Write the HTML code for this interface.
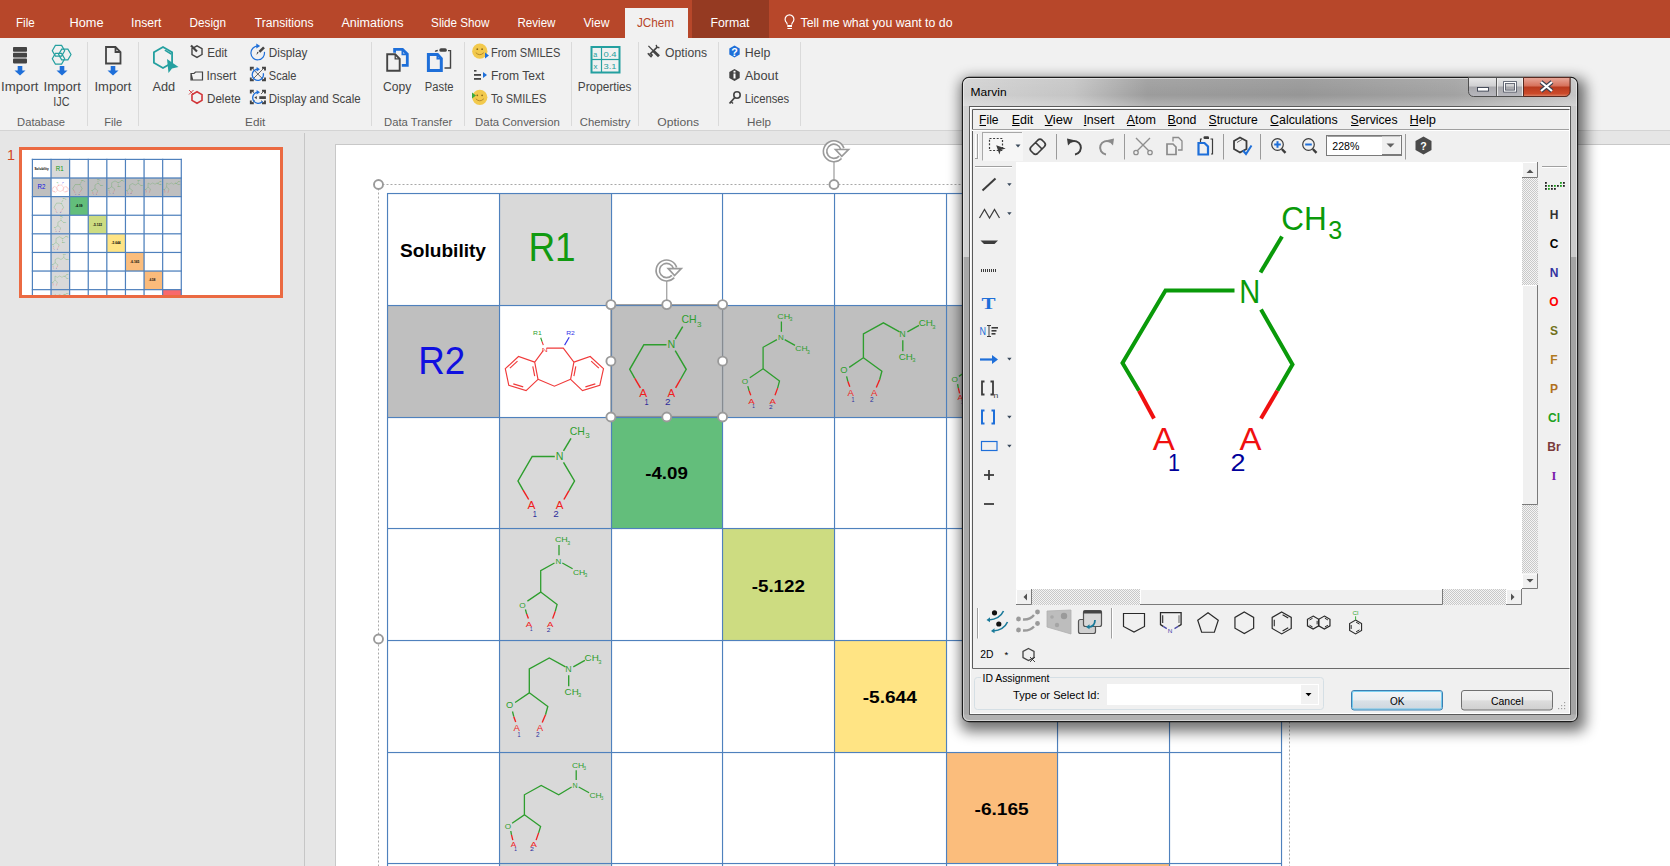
<!DOCTYPE html>
<html><head><meta charset="utf-8">
<style>
*{margin:0;padding:0}
html,body{width:1670px;height:866px;overflow:hidden;background:#E6E6E6}
svg{position:absolute;left:0;top:0;font-family:"Liberation Sans", sans-serif}
text{white-space:pre}
</style></head><body>
<svg width="1670" height="866" viewBox="0 0 1670 866">
<rect x="0" y="0" width="1670" height="38" fill="#B7472A"/>
<rect x="692" y="0" width="77" height="38" fill="#953A22"/>
<rect x="625" y="8" width="63" height="31" fill="#F1F1F1"/>
<text x="16.00" y="27.00" font-size="12.5" fill="#FFFFFF" textLength="18.70" lengthAdjust="spacingAndGlyphs">File</text>
<text x="69.50" y="27.00" font-size="12.5" fill="#FFFFFF" textLength="34.00" lengthAdjust="spacingAndGlyphs">Home</text>
<text x="131.00" y="27.00" font-size="12.5" fill="#FFFFFF" textLength="30.50" lengthAdjust="spacingAndGlyphs">Insert</text>
<text x="189.50" y="27.00" font-size="12.5" fill="#FFFFFF" textLength="36.60" lengthAdjust="spacingAndGlyphs">Design</text>
<text x="254.80" y="27.00" font-size="12.5" fill="#FFFFFF" textLength="58.70" lengthAdjust="spacingAndGlyphs">Transitions</text>
<text x="341.50" y="27.00" font-size="12.5" fill="#FFFFFF" textLength="62.00" lengthAdjust="spacingAndGlyphs">Animations</text>
<text x="431.10" y="27.00" font-size="12.5" fill="#FFFFFF" textLength="58.40" lengthAdjust="spacingAndGlyphs">Slide Show</text>
<text x="517.50" y="27.00" font-size="12.5" fill="#FFFFFF" textLength="38.00" lengthAdjust="spacingAndGlyphs">Review</text>
<text x="583.50" y="27.00" font-size="12.5" fill="#FFFFFF" textLength="26.00" lengthAdjust="spacingAndGlyphs">View</text>
<text x="710.50" y="27.00" font-size="12.5" fill="#FFFFFF" textLength="39.00" lengthAdjust="spacingAndGlyphs">Format</text>
<text x="636.90" y="27.00" font-size="12.5" fill="#B7472A" textLength="37.20" lengthAdjust="spacingAndGlyphs">JChem</text>
<path d="M787.4 24.6 L786.6 22.6 A4.4 4.4 0 1 1 792.4 22.6 L791.6 24.6" fill="none" stroke="#FFFFFF" stroke-width="1.2"/>
<rect x="787.3" y="25" width="4.7" height="2" fill="#FFFFFF"/>
<rect x="787.4" y="28" width="4.5" height="1" fill="#FFFFFF"/>
<text x="800.50" y="27.00" font-size="12.5" fill="#FFFFFF" textLength="152.00" lengthAdjust="spacingAndGlyphs">Tell me what you want to do</text>
<rect x="0" y="38" width="1670" height="92" fill="#F1F1F1"/>
<rect x="0" y="130" width="1670" height="1" fill="#D4D4D4"/>
<rect x="87" y="42" width="1" height="84" fill="#DADADA"/>
<rect x="138" y="42" width="1" height="84" fill="#DADADA"/>
<rect x="371" y="42" width="1" height="84" fill="#DADADA"/>
<rect x="464" y="42" width="1" height="84" fill="#DADADA"/>
<rect x="571" y="42" width="1" height="84" fill="#DADADA"/>
<rect x="638" y="42" width="1" height="84" fill="#DADADA"/>
<rect x="718" y="42" width="1" height="84" fill="#DADADA"/>
<rect x="800" y="42" width="1" height="84" fill="#DADADA"/>
<text x="1.10" y="90.60" font-size="12.3" fill="#444444" textLength="37.40" lengthAdjust="spacingAndGlyphs">Import</text>
<text x="43.50" y="90.60" font-size="12.3" fill="#444444" textLength="37.30" lengthAdjust="spacingAndGlyphs">Import</text>
<text x="53.20" y="106.40" font-size="12.3" fill="#444444" textLength="16.30" lengthAdjust="spacingAndGlyphs">IJC</text>
<text x="94.50" y="90.60" font-size="12.3" fill="#444444" textLength="36.80" lengthAdjust="spacingAndGlyphs">Import</text>
<text x="152.50" y="90.60" font-size="12.3" fill="#444444" textLength="22.70" lengthAdjust="spacingAndGlyphs">Add</text>
<text x="383.10" y="90.60" font-size="12.3" fill="#444444" textLength="28.30" lengthAdjust="spacingAndGlyphs">Copy</text>
<text x="424.80" y="90.60" font-size="12.3" fill="#444444" textLength="28.70" lengthAdjust="spacingAndGlyphs">Paste</text>
<text x="577.80" y="90.60" font-size="12.3" fill="#444444" textLength="53.70" lengthAdjust="spacingAndGlyphs">Properties</text>
<text x="207.20" y="56.90" font-size="12.3" fill="#444444" textLength="20.10" lengthAdjust="spacingAndGlyphs">Edit</text>
<text x="206.40" y="79.70" font-size="12.3" fill="#444444" textLength="30.00" lengthAdjust="spacingAndGlyphs">Insert</text>
<text x="207.00" y="103.00" font-size="12.3" fill="#444444" textLength="33.60" lengthAdjust="spacingAndGlyphs">Delete</text>
<text x="268.80" y="56.90" font-size="12.3" fill="#444444" textLength="38.50" lengthAdjust="spacingAndGlyphs">Display</text>
<text x="268.80" y="79.70" font-size="12.3" fill="#444444" textLength="27.60" lengthAdjust="spacingAndGlyphs">Scale</text>
<text x="268.80" y="103.00" font-size="12.3" fill="#444444" textLength="91.80" lengthAdjust="spacingAndGlyphs">Display and Scale</text>
<text x="490.90" y="56.90" font-size="12.3" fill="#444444" textLength="69.50" lengthAdjust="spacingAndGlyphs">From SMILES</text>
<text x="490.90" y="79.70" font-size="12.3" fill="#444444" textLength="53.50" lengthAdjust="spacingAndGlyphs">From Text</text>
<text x="490.90" y="103.00" font-size="12.3" fill="#444444" textLength="55.40" lengthAdjust="spacingAndGlyphs">To SMILES</text>
<text x="665.10" y="56.90" font-size="12.3" fill="#444444" textLength="41.90" lengthAdjust="spacingAndGlyphs">Options</text>
<text x="744.80" y="56.90" font-size="12.3" fill="#444444" textLength="25.50" lengthAdjust="spacingAndGlyphs">Help</text>
<text x="744.80" y="79.70" font-size="12.3" fill="#444444" textLength="33.40" lengthAdjust="spacingAndGlyphs">About</text>
<text x="744.80" y="103.00" font-size="12.3" fill="#444444" textLength="44.40" lengthAdjust="spacingAndGlyphs">Licenses</text>
<text x="17.10" y="126.10" font-size="11.5" fill="#5E5E5E" textLength="48.00" lengthAdjust="spacingAndGlyphs">Database</text>
<text x="104.20" y="126.10" font-size="11.5" fill="#5E5E5E" textLength="17.90" lengthAdjust="spacingAndGlyphs">File</text>
<text x="245.10" y="126.10" font-size="11.5" fill="#5E5E5E" textLength="20.20" lengthAdjust="spacingAndGlyphs">Edit</text>
<text x="384.00" y="126.10" font-size="11.5" fill="#5E5E5E" textLength="68.20" lengthAdjust="spacingAndGlyphs">Data Transfer</text>
<text x="475.10" y="126.10" font-size="11.5" fill="#5E5E5E" textLength="84.70" lengthAdjust="spacingAndGlyphs">Data Conversion</text>
<text x="579.80" y="126.10" font-size="11.5" fill="#5E5E5E" textLength="50.70" lengthAdjust="spacingAndGlyphs">Chemistry</text>
<text x="657.20" y="126.10" font-size="11.5" fill="#5E5E5E" textLength="41.90" lengthAdjust="spacingAndGlyphs">Options</text>
<text x="747.00" y="126.10" font-size="11.5" fill="#5E5E5E" textLength="24.00" lengthAdjust="spacingAndGlyphs">Help</text>
<rect x="13" y="47.0" width="14" height="4.8" fill="#444444" rx="0.8"/>
<rect x="13" y="52.8" width="14" height="4.8" fill="#444444" rx="0.8"/>
<rect x="13" y="58.6" width="14" height="4.8" fill="#444444" rx="0.8"/>
<rect x="17.7" y="66" width="4.6" height="5" fill="#1E6FD9"/>
<path d="M14.5 70.5 L25.5 70.5 L20 75.5 Z" fill="#1E6FD9"/>
<path d="M64.70 50.80 L61.60 56.17 L55.40 56.17 L52.30 50.80 L55.40 45.43 L61.60 45.43 Z" fill="none" stroke="#24A0A0" stroke-width="1.2"/>
<path d="M71.00 54.50 L67.90 59.87 L61.70 59.87 L58.60 54.50 L61.70 49.13 L67.90 49.13 Z" fill="none" stroke="#24A0A0" stroke-width="1.2"/>
<path d="M64.70 58.80 L61.60 64.17 L55.40 64.17 L52.30 58.80 L55.40 53.43 L61.60 53.43 Z" fill="none" stroke="#24A0A0" stroke-width="1.2"/>
<rect x="59.7" y="66" width="4.6" height="5" fill="#1E6FD9"/>
<path d="M56.5 70.5 L67.5 70.5 L62 75.5 Z" fill="#1E6FD9"/>
<path d="M106 47 h9.5 l5 5 v11.5 h-14.5 Z M115.5 47 v5 h5" fill="none" stroke="#444444" stroke-width="1.8"/>
<rect x="110.7" y="66" width="4.6" height="5" fill="#1E6FD9"/>
<path d="M107.5 70.5 L118.5 70.5 L113 75.5 Z" fill="#1E6FD9"/>
<path d="M172.09 62.75 L163.00 68.00 L153.91 62.75 L153.91 52.25 L163.00 47.00 L172.09 52.25 Z" fill="none" stroke="#24A0A0" stroke-width="1.8"/>
<line x1="164.8" y1="50.2" x2="171.2" y2="54" stroke="#24A0A0" stroke-width="1.5"/>
<path d="M167 59 L178.5 67 L172 68.5 L168.5 73 Z" fill="#24A0A0"/>
<path d="M202.02 54.50 L197.00 57.40 L191.98 54.50 L191.98 48.70 L197.00 45.80 L202.02 48.70 Z" fill="none" stroke="#444444" stroke-width="1.4"/>
<line x1="191" y1="45.5" x2="197" y2="51.5" stroke="#444444" stroke-width="2.2"/>
<path d="M191 73.5 h3 l1.5-1.5 h7 v8 h-11.5 Z M191 73.5 l1.5 6" fill="none" stroke="#444444" stroke-width="1.2"/>
<path d="M202.02 100.40 L197.00 103.30 L191.98 100.40 L191.98 94.60 L197.00 91.70 L202.02 94.60 Z" fill="none" stroke="#D13438" stroke-width="1.6"/>
<line x1="189" y1="90" x2="193.5" y2="94.5" stroke="#D13438" stroke-width="0.9"/>
<line x1="193.5" y1="90" x2="189" y2="94.5" stroke="#D13438" stroke-width="0.9"/>
<path d="M257.8 46.2 A6.8 6.8 0 1 0 264.4 51.8" fill="none" stroke="#1E6FD9" stroke-width="1.2"/>
<path d="M256.3 43.6 L260.2 46 L256.3 48.4 Z" fill="#1E6FD9"/>
<line x1="264" y1="47.3" x2="259.4" y2="51.9" stroke="#444444" stroke-width="2.6"/>
<path d="M258.7 52.6 L256.4 54.9 L257.3 51.8 Z" fill="#444444"/>
<path d="M250.8 70.5 V67.8 H253.8 M262 67.8 H265 V70.5 M250.8 77.5 V80.2 H253.8 M262 80.2 H265 V77.5" fill="none" stroke="#444444" stroke-width="1.9"/>
<line x1="252" y1="68.2" x2="263.8" y2="80" stroke="#444444" stroke-width="0.8"/>
<line x1="263.8" y1="68.2" x2="252" y2="80" stroke="#444444" stroke-width="0.8"/>
<path d="M257.8 69.2 A5.6 5.6 0 1 0 263.2 73.2" fill="none" stroke="#1E6FD9" stroke-width="1.3"/>
<path d="M256.6 67 L260 69.2 L256.6 71.4 Z" fill="#1E6FD9"/>
<path d="M250.8 93.5 V90.8 H253.8 M262 90.8 H265 V93.5 M250.8 100.5 V103.2 H253.8 M262 103.2 H265 V100.5" fill="none" stroke="#444444" stroke-width="1.9"/>
<line x1="252" y1="91.2" x2="255" y2="94" stroke="#444444" stroke-width="0.8"/>
<line x1="263.8" y1="91.2" x2="261" y2="94" stroke="#444444" stroke-width="0.8"/>
<line x1="252" y1="103" x2="255" y2="100.5" stroke="#444444" stroke-width="0.8"/>
<line x1="263.8" y1="103" x2="261" y2="100.5" stroke="#444444" stroke-width="0.8"/>
<path d="M257.8 92.2 A5.6 5.6 0 1 0 262.5 101.5" fill="none" stroke="#1E6FD9" stroke-width="1.3"/>
<path d="M256.6 90 L260 92.2 L256.6 94.4 Z" fill="#1E6FD9"/>
<rect x="259.3" y="96.2" width="6.6" height="2.8" fill="#444444"/>
<path d="M254.3 97.6 L256.8 96 V99.2 Z" fill="#444444"/>
<path d="M394.6 52.8 V49.4 H402.5 L407.3 54.2 V65.3 H401.8" fill="none" stroke="#1E6FD9" stroke-width="2.8"/>
<path d="M402.3 49.6 V54.4 H407.1" fill="none" stroke="#1E6FD9" stroke-width="1.6"/>
<path d="M387.2 54.3 H395.2 L399.7 58.8 V70.8 H387.2 Z" fill="#F1F1F1" stroke="#444444" stroke-width="1.9"/>
<path d="M395.2 54.5 V58.8 H399.5" fill="none" stroke="#444444" stroke-width="1.3"/>
<path d="M435.5 51.8 Q435.5 50.5 437.8 50.5 M448 50.6 H450.5 V68 H444.5" fill="none" stroke="#444444" stroke-width="1.4"/>
<rect x="439.4" y="48.2" width="7.4" height="3.6" fill="#444444" rx="1.6"/>
<path d="M428.4 54.5 H437.5 L441.3 58.5 V70.4 H428.4 Z" fill="#F1F1F1" stroke="#1E6FD9" stroke-width="3"/>
<path d="M437.3 54.7 V58.7 H441.1" fill="none" stroke="#1E6FD9" stroke-width="1.6"/>
<circle cx="479.8" cy="51.2" r="7.6" fill="#F2C94C"/>
<circle cx="477.3" cy="49.2" r="0.9" fill="#8A6A1A"/><circle cx="482.1" cy="49.2" r="0.9" fill="#8A6A1A"/>
<path d="M475.8 52.7 q4 4 8 0" fill="none" stroke="#B58A2A" stroke-width="1"/>
<path d="M485 52.5 L489 55.5 L485 58.5 Z" fill="#1E6FD9"/>
<circle cx="479.8" cy="97.3" r="7.6" fill="#F2C94C"/>
<circle cx="477.3" cy="95.3" r="0.9" fill="#8A6A1A"/><circle cx="482.1" cy="95.3" r="0.9" fill="#8A6A1A"/>
<path d="M475.8 98.8 q4 4 8 0" fill="none" stroke="#B58A2A" stroke-width="1"/>
<path d="M472 92.5 L476 95.5 L472 98.5 Z" fill="#3DAA3D"/>
<rect x="474" y="70" width="2.5" height="1.6" fill="#444444"/>
<rect x="474" y="74" width="7" height="1.8" fill="#444444"/>
<rect x="474" y="78" width="7" height="1.8" fill="#444444"/>
<path d="M483 72 L487 75 L483 78 Z" fill="#1E6FD9"/>
<rect x="591.5" y="47" width="28" height="25.5" fill="none" stroke="#24A0A0" stroke-width="2"/>
<line x1="601.5" y1="47" x2="601.5" y2="72.5" stroke="#24A0A0" stroke-width="1.2"/>
<line x1="591.5" y1="59.5" x2="619.5" y2="59.5" stroke="#24A0A0" stroke-width="1.2"/>
<text x="593.30" y="56.50" font-size="7" fill="#24A0A0" textLength="4.00" lengthAdjust="spacingAndGlyphs">a</text>
<text x="603.50" y="56.80" font-size="7" fill="#24A0A0" textLength="13.00" lengthAdjust="spacingAndGlyphs">0.4</text>
<text x="593.50" y="68.80" font-size="7" fill="#24A0A0" textLength="4.00" lengthAdjust="spacingAndGlyphs">x</text>
<text x="603.50" y="69.00" font-size="7" fill="#24A0A0" textLength="13.00" lengthAdjust="spacingAndGlyphs">3.1</text>
<line x1="648.4" y1="45.9" x2="653.5" y2="51" stroke="#444444" stroke-width="1.3"/>
<line x1="653.2" y1="50.7" x2="659" y2="56.2" stroke="#444444" stroke-width="2.8"/>
<line x1="649.5" y1="54.5" x2="657.5" y2="46.8" stroke="#444444" stroke-width="1.7"/>
<path d="M647.8 53.2 L649.5 55.2 L651 56.6 L652.2 55 L650.5 53.5" fill="none" stroke="#444444" stroke-width="1.4"/>
<path d="M656.2 44.8 L656.8 47.2 L659.4 47.8" fill="none" stroke="#444444" stroke-width="1.4"/>
<path d="M739.70 54.50 L734.50 57.50 L729.30 54.50 L729.30 48.50 L734.50 45.50 L739.70 48.50 Z" fill="#1E6FD9"/>
<text x="731.30" y="56.00" font-size="11.5" fill="#FFFFFF" textLength="6.50" lengthAdjust="spacingAndGlyphs" font-weight="bold">?</text>
<path d="M739.70 78.00 L734.50 81.00 L729.30 78.00 L729.30 72.00 L734.50 69.00 L739.70 72.00 Z" fill="#444444"/>
<rect x="733.5" y="73.5" width="2" height="5" fill="#FFFFFF"/>
<rect x="733.5" y="70.8" width="2" height="1.8" fill="#FFFFFF"/>
<circle cx="737" cy="95" r="3.2" fill="none" stroke="#444444" stroke-width="1.6"/>
<line x1="734.8" y1="97.5" x2="729.5" y2="103.5" stroke="#444444" stroke-width="1.8"/>
<line x1="731" y1="101.5" x2="733" y2="103.5" stroke="#444444" stroke-width="1.4"/>
<rect x="0" y="131" width="1670" height="735" fill="#E6E6E6"/>
<rect x="304" y="133" width="1" height="733" fill="#C6C6C6"/>
<defs><clipPath id="mainclip"><rect x="336" y="145" width="1335" height="722"/></clipPath><clipPath id="thumbclip"><rect x="22" y="150" width="258" height="145"/></clipPath></defs>
<rect x="335" y="144" width="1340" height="730" fill="#C8C8C8"/>
<rect x="336" y="145" width="1340" height="730" fill="#FFFFFF"/>
<g clip-path="url(#mainclip)"><g transform="translate(335,144)"><rect x="164.20" y="49.60" width="111.70" height="111.70" fill="#D9D9D9"/><rect x="52.50" y="161.30" width="893.60" height="111.70" fill="#BFBFBF"/><rect x="164.20" y="161.30" width="111.70" height="111.70" fill="#FFFFFF"/><rect x="164.20" y="273.00" width="111.70" height="670.20" fill="#D9D9D9"/><rect x="275.90" y="273.00" width="111.70" height="111.70" fill="#63BE7B"/><rect x="387.60" y="384.70" width="111.70" height="111.70" fill="#CDDC81"/><rect x="499.30" y="496.40" width="111.70" height="111.70" fill="#FFE484"/><rect x="611.00" y="608.10" width="111.70" height="111.70" fill="#FBBD7C"/><rect x="722.70" y="719.80" width="111.70" height="111.70" fill="#FBBB7B"/><rect x="834.40" y="831.50" width="111.70" height="111.70" fill="#F8696B"/><rect x="51.95" y="49.10" width="1.15" height="894.60" fill="#4F81BD"/><rect x="163.95" y="49.10" width="1.15" height="894.60" fill="#4F81BD"/><rect x="275.95" y="49.10" width="1.15" height="894.60" fill="#4F81BD"/><rect x="386.95" y="49.10" width="1.15" height="894.60" fill="#4F81BD"/><rect x="498.95" y="49.10" width="1.15" height="894.60" fill="#4F81BD"/><rect x="610.95" y="49.10" width="1.15" height="894.60" fill="#4F81BD"/><rect x="721.95" y="49.10" width="1.15" height="894.60" fill="#4F81BD"/><rect x="833.95" y="49.10" width="1.15" height="894.60" fill="#4F81BD"/><rect x="945.95" y="49.10" width="1.15" height="894.60" fill="#4F81BD"/><rect x="52.00" y="48.95" width="894.60" height="1.15" fill="#4F81BD"/><rect x="52.00" y="160.95" width="894.60" height="1.15" fill="#4F81BD"/><rect x="52.00" y="272.95" width="894.60" height="1.15" fill="#4F81BD"/><rect x="52.00" y="383.95" width="894.60" height="1.15" fill="#4F81BD"/><rect x="52.00" y="495.95" width="894.60" height="1.15" fill="#4F81BD"/><rect x="52.00" y="607.95" width="894.60" height="1.15" fill="#4F81BD"/><rect x="52.00" y="718.95" width="894.60" height="1.15" fill="#4F81BD"/><rect x="52.00" y="830.95" width="894.60" height="1.15" fill="#4F81BD"/><rect x="52.00" y="942.95" width="894.60" height="1.15" fill="#4F81BD"/><text x="65.00" y="112.60" font-size="19" font-weight="bold" fill="#000" textLength="86" lengthAdjust="spacingAndGlyphs">Solubility</text><text x="193.40" y="116.90" font-size="41.5" fill="#119A11" textLength="47.3" lengthAdjust="spacingAndGlyphs">R1</text><text x="83.30" y="230.20" font-size="39" fill="#1010E0" textLength="47" lengthAdjust="spacingAndGlyphs">R2</text><text x="310.20" y="335.30" font-size="17.2" font-weight="bold" fill="#000" textLength="42.70" lengthAdjust="spacingAndGlyphs">-4.09</text><text x="416.70" y="447.90" font-size="17.2" font-weight="bold" fill="#000" textLength="53.30" lengthAdjust="spacingAndGlyphs">-5.122</text><text x="527.70" y="559.00" font-size="17.2" font-weight="bold" fill="#000" textLength="54.20" lengthAdjust="spacingAndGlyphs">-5.644</text><text x="639.60" y="670.80" font-size="17.2" font-weight="bold" fill="#000" textLength="54.10" lengthAdjust="spacingAndGlyphs">-6.165</text><text x="750.70" y="780.80" font-size="17.2" font-weight="bold" fill="#000">-6.58</text><text x="862.40" y="892.50" font-size="17.2" font-weight="bold" fill="#000">-7.2</text><g transform="translate(164.20,161.30)"><path d="M47.30 42.80 L64.10 42.80 L74.70 56.80 L71.40 74.00 L83.30 85.30 L100.60 80.00 L104.30 63.40 L91.00 51.20 L74.70 56.80" fill="none" stroke="#F03A3A" stroke-width="1.15" stroke-linecap="butt" stroke-linejoin="miter"/><path d="M44.20 45.00 L35.50 56.80 L38.80 74.00 L26.90 85.30 L9.60 80.00 L6.10 63.40 L19.30 51.20 L35.50 56.80" fill="none" stroke="#F03A3A" stroke-width="1.15" stroke-linecap="butt" stroke-linejoin="miter"/><path d="M38.80 74.00 L55.20 80.90 L71.40 74.00" fill="none" stroke="#F03A3A" stroke-width="1.15" stroke-linecap="butt" stroke-linejoin="miter"/><path d="M18.29 55.81 L10.71 62.81" fill="none" stroke="#F03A3A" stroke-width="1.15" stroke-linecap="butt" stroke-linejoin="miter"/><path d="M14.09 78.57 L24.02 81.62" fill="none" stroke="#F03A3A" stroke-width="1.15" stroke-linecap="butt" stroke-linejoin="miter"/><path d="M33.60 61.01 L35.50 70.89" fill="none" stroke="#F03A3A" stroke-width="1.15" stroke-linecap="butt" stroke-linejoin="miter"/><path d="M92.01 55.81 L99.65 62.81" fill="none" stroke="#F03A3A" stroke-width="1.15" stroke-linecap="butt" stroke-linejoin="miter"/><path d="M96.12 78.57 L86.19 81.62" fill="none" stroke="#F03A3A" stroke-width="1.15" stroke-linecap="butt" stroke-linejoin="miter"/><path d="M76.61 61.01 L74.71 70.89" fill="none" stroke="#F03A3A" stroke-width="1.15" stroke-linecap="butt" stroke-linejoin="miter"/><path d="M44.10 39.80 L42.80 36.15" fill="none" stroke="#F03A3A" stroke-width="1.15" stroke-linecap="butt" stroke-linejoin="miter"/><path d="M42.80 36.15 L41.50 32.50" fill="none" stroke="#2E9E2E" stroke-width="1.15" stroke-linecap="butt" stroke-linejoin="miter"/><path d="M65.40 39.80 L70.00 31.90" fill="none" stroke="#3535E8" stroke-width="1.15" stroke-linecap="butt" stroke-linejoin="miter"/><text x="42.60" y="46.30" font-size="5.8" fill="#F03A3A" textLength="6.00" lengthAdjust="spacingAndGlyphs">N</text><text x="33.90" y="29.60" font-size="5.8" fill="#2E9E2E" textLength="8.60" lengthAdjust="spacingAndGlyphs">R1</text><text x="67.00" y="29.60" font-size="5.8" fill="#3535E8" textLength="8.60" lengthAdjust="spacingAndGlyphs">R2</text></g><g transform="translate(275.90,161.30)"><path d="M71.80 21.30 L64.30 33.90" fill="none" stroke="#2E9E2E" stroke-width="1.45" stroke-linecap="butt" stroke-linejoin="miter"/><path d="M55.60 39.40 L33.00 39.40 L18.80 64.00 L23.90 73.10" fill="none" stroke="#2E9E2E" stroke-width="1.45" stroke-linecap="butt" stroke-linejoin="miter"/><path d="M23.90 73.10 L29.50 82.50" fill="none" stroke="#F01E1E" stroke-width="1.45" stroke-linecap="butt" stroke-linejoin="miter"/><path d="M64.30 45.30 L75.30 64.00 L69.80 73.70" fill="none" stroke="#2E9E2E" stroke-width="1.45" stroke-linecap="butt" stroke-linejoin="miter"/><path d="M69.80 73.70 L64.70 82.50" fill="none" stroke="#F01E1E" stroke-width="1.45" stroke-linecap="butt" stroke-linejoin="miter"/><text x="70.60" y="17.50" font-size="10.2" fill="#2E9E2E" textLength="15.10" lengthAdjust="spacingAndGlyphs">CH</text><text x="86.10" y="21.30" font-size="7.4" fill="#2E9E2E" textLength="4.50" lengthAdjust="spacingAndGlyphs">3</text><text x="56.60" y="42.70" font-size="10.6" fill="#2E9E2E" textLength="7.70" lengthAdjust="spacingAndGlyphs">N</text><text x="28.40" y="91.80" font-size="10.6" fill="#F01E1E" textLength="7.90" lengthAdjust="spacingAndGlyphs">A</text><text x="56.60" y="91.80" font-size="10.6" fill="#F01E1E" textLength="7.70" lengthAdjust="spacingAndGlyphs">A</text><text x="33.60" y="100.20" font-size="8.8" fill="#2B2B9B" textLength="4.10" lengthAdjust="spacingAndGlyphs">1</text><text x="54.00" y="100.20" font-size="8.8" fill="#2B2B9B" textLength="5.50" lengthAdjust="spacingAndGlyphs">2</text></g><g transform="translate(387.60,161.30)"><path d="M58.80 16.20 L58.80 26.50" fill="none" stroke="#2E9E2E" stroke-width="1.3" stroke-linecap="butt" stroke-linejoin="miter"/><path d="M62.10 34.30 L72.40 40.10" fill="none" stroke="#2E9E2E" stroke-width="1.3" stroke-linecap="butt" stroke-linejoin="miter"/><path d="M54.30 34.30 L40.50 42.00 L40.50 63.40 L27.20 72.40" fill="none" stroke="#2E9E2E" stroke-width="1.3" stroke-linecap="butt" stroke-linejoin="miter"/><path d="M40.50 63.40 L56.90 75.70 L55.00 82.80" fill="none" stroke="#2E9E2E" stroke-width="1.3" stroke-linecap="butt" stroke-linejoin="miter"/><path d="M55.00 82.80 L52.40 89.90" fill="none" stroke="#F01E1E" stroke-width="1.3" stroke-linecap="butt" stroke-linejoin="miter"/><path d="M25.20 80.80 L26.50 85.40" fill="none" stroke="#2E9E2E" stroke-width="1.3" stroke-linecap="butt" stroke-linejoin="miter"/><path d="M26.50 85.40 L28.20 89.90" fill="none" stroke="#F01E1E" stroke-width="1.3" stroke-linecap="butt" stroke-linejoin="miter"/><text x="54.70" y="13.60" font-size="7.2" fill="#2E9E2E" textLength="12.90" lengthAdjust="spacingAndGlyphs">CH</text><text x="67.00" y="16.00" font-size="5.2" fill="#2E9E2E" textLength="2.90" lengthAdjust="spacingAndGlyphs">3</text><text x="72.70" y="45.90" font-size="7.2" fill="#2E9E2E" textLength="12.30" lengthAdjust="spacingAndGlyphs">CH</text><text x="84.40" y="48.30" font-size="5.2" fill="#2E9E2E" textLength="2.80" lengthAdjust="spacingAndGlyphs">3</text><text x="55.30" y="34.90" font-size="8" fill="#2E9E2E" textLength="5.80" lengthAdjust="spacingAndGlyphs">N</text><text x="19.10" y="78.90" font-size="8" fill="#2E9E2E" textLength="6.40" lengthAdjust="spacingAndGlyphs">O</text><text x="25.60" y="98.30" font-size="8" fill="#F01E1E" textLength="6.40" lengthAdjust="spacingAndGlyphs">A</text><text x="46.90" y="98.30" font-size="8" fill="#F01E1E" textLength="6.40" lengthAdjust="spacingAndGlyphs">A</text><text x="29.70" y="102.80" font-size="5.5" fill="#2B2B9B" textLength="2.50" lengthAdjust="spacingAndGlyphs">1</text><text x="46.50" y="103.50" font-size="5.5" fill="#2B2B9B" textLength="3.60" lengthAdjust="spacingAndGlyphs">2</text></g><g transform="translate(499.30,161.30)"><path d="M65.30 26.50 L49.10 17.50 L29.10 28.50 L29.10 52.40 L14.90 62.10" fill="none" stroke="#2E9E2E" stroke-width="1.35" stroke-linecap="butt" stroke-linejoin="miter"/><path d="M29.10 52.40 L47.60 66.00 L45.30 74.40" fill="none" stroke="#2E9E2E" stroke-width="1.35" stroke-linecap="butt" stroke-linejoin="miter"/><path d="M45.30 74.40 L42.00 82.10" fill="none" stroke="#F01E1E" stroke-width="1.35" stroke-linecap="butt" stroke-linejoin="miter"/><path d="M12.30 71.10 L13.60 76.30" fill="none" stroke="#2E9E2E" stroke-width="1.35" stroke-linecap="butt" stroke-linejoin="miter"/><path d="M13.60 76.30 L15.50 81.50" fill="none" stroke="#F01E1E" stroke-width="1.35" stroke-linecap="butt" stroke-linejoin="miter"/><path d="M73.10 26.50 L84.70 20.00" fill="none" stroke="#2E9E2E" stroke-width="1.35" stroke-linecap="butt" stroke-linejoin="miter"/><path d="M68.50 34.90 L68.50 45.90" fill="none" stroke="#2E9E2E" stroke-width="1.35" stroke-linecap="butt" stroke-linejoin="miter"/><text x="5.90" y="67.90" font-size="8.4" fill="#2E9E2E" textLength="7.30" lengthAdjust="spacingAndGlyphs">O</text><text x="65.00" y="31.70" font-size="8.4" fill="#2E9E2E" textLength="6.40" lengthAdjust="spacingAndGlyphs">N</text><text x="84.40" y="20.70" font-size="9" fill="#2E9E2E" textLength="14.20" lengthAdjust="spacingAndGlyphs">CH</text><text x="98.00" y="23.50" font-size="6" fill="#2E9E2E" textLength="3.20" lengthAdjust="spacingAndGlyphs">3</text><text x="64.40" y="54.30" font-size="9" fill="#2E9E2E" textLength="14.10" lengthAdjust="spacingAndGlyphs">CH</text><text x="77.90" y="57.10" font-size="6" fill="#2E9E2E" textLength="3.20" lengthAdjust="spacingAndGlyphs">3</text><text x="13.30" y="90.50" font-size="8.4" fill="#F01E1E" textLength="6.40" lengthAdjust="spacingAndGlyphs">A</text><text x="36.60" y="90.50" font-size="8.4" fill="#F01E1E" textLength="6.40" lengthAdjust="spacingAndGlyphs">A</text><text x="17.20" y="96.40" font-size="6.5" fill="#2B2B9B" textLength="3.00" lengthAdjust="spacingAndGlyphs">1</text><text x="35.70" y="96.40" font-size="6.5" fill="#2B2B9B" textLength="3.60" lengthAdjust="spacingAndGlyphs">2</text></g><g transform="translate(611.00,161.30)"><path d="M77.00 18.10 L77.00 27.80" fill="none" stroke="#2E9E2E" stroke-width="1.3" stroke-linecap="butt" stroke-linejoin="miter"/><path d="M79.50 34.90 L89.90 40.70" fill="none" stroke="#2E9E2E" stroke-width="1.3" stroke-linecap="butt" stroke-linejoin="miter"/><path d="M72.40 34.90 L59.50 42.70 L42.00 33.40 L25.20 42.70 L25.20 62.70 L12.90 71.10" fill="none" stroke="#2E9E2E" stroke-width="1.3" stroke-linecap="butt" stroke-linejoin="miter"/><path d="M25.20 62.70 L41.40 74.40 L39.40 80.80" fill="none" stroke="#2E9E2E" stroke-width="1.3" stroke-linecap="butt" stroke-linejoin="miter"/><path d="M39.40 80.80 L36.90 88.00" fill="none" stroke="#F01E1E" stroke-width="1.3" stroke-linecap="butt" stroke-linejoin="miter"/><path d="M11.60 78.90 L12.30 82.80" fill="none" stroke="#2E9E2E" stroke-width="1.3" stroke-linecap="butt" stroke-linejoin="miter"/><path d="M12.30 82.80 L13.60 88.00" fill="none" stroke="#F01E1E" stroke-width="1.3" stroke-linecap="butt" stroke-linejoin="miter"/><text x="72.70" y="16.20" font-size="6.6" fill="#2E9E2E" textLength="12.30" lengthAdjust="spacingAndGlyphs">CH</text><text x="84.40" y="18.20" font-size="4.6" fill="#2E9E2E" textLength="2.50" lengthAdjust="spacingAndGlyphs">3</text><text x="90.20" y="45.90" font-size="6.6" fill="#2E9E2E" textLength="12.30" lengthAdjust="spacingAndGlyphs">CH</text><text x="101.90" y="47.90" font-size="4.6" fill="#2E9E2E" textLength="2.30" lengthAdjust="spacingAndGlyphs">3</text><text x="73.40" y="35.60" font-size="6.5" fill="#2E9E2E" textLength="5.10" lengthAdjust="spacingAndGlyphs">N</text><text x="5.50" y="77.00" font-size="7" fill="#2E9E2E" textLength="6.40" lengthAdjust="spacingAndGlyphs">O</text><text x="11.60" y="95.10" font-size="7" fill="#F01E1E" textLength="5.50" lengthAdjust="spacingAndGlyphs">A</text><text x="31.40" y="95.10" font-size="7" fill="#F01E1E" textLength="6.40" lengthAdjust="spacingAndGlyphs">A</text><text x="15.00" y="98.90" font-size="5" fill="#2B2B9B" textLength="2.60" lengthAdjust="spacingAndGlyphs">1</text><text x="30.70" y="99.00" font-size="5" fill="#2B2B9B" textLength="3.90" lengthAdjust="spacingAndGlyphs">2</text></g><g transform="translate(722.70,161.30)"><path d="M80.00 28.00 L66.00 38.00 L52.00 30.00 L38.00 38.00 L24.00 30.00 L24.00 55.00 L12.00 66.00" fill="none" stroke="#2E9E2E" stroke-width="1.2" stroke-linecap="butt" stroke-linejoin="miter"/><path d="M24.00 55.00 L38.00 66.00 L36.00 75.00" fill="none" stroke="#2E9E2E" stroke-width="1.2" stroke-linecap="butt" stroke-linejoin="miter"/><path d="M36.00 75.00 L33.00 84.00" fill="none" stroke="#F01E1E" stroke-width="1.2" stroke-linecap="butt" stroke-linejoin="miter"/><path d="M11.00 72.00 L14.00 84.00" fill="none" stroke="#F01E1E" stroke-width="1.2" stroke-linecap="butt" stroke-linejoin="miter"/><path d="M84.00 30.00 L94.00 24.00" fill="none" stroke="#2E9E2E" stroke-width="1.2" stroke-linecap="butt" stroke-linejoin="miter"/><path d="M84.00 34.00 L94.00 40.00" fill="none" stroke="#2E9E2E" stroke-width="1.2" stroke-linecap="butt" stroke-linejoin="miter"/><text x="77.70" y="34.00" font-size="7" fill="#2E9E2E" textLength="6.60" lengthAdjust="spacingAndGlyphs">N</text><text x="93.70" y="24.00" font-size="6.5" fill="#2E9E2E" textLength="10.60" lengthAdjust="spacingAndGlyphs">CH</text><text x="93.70" y="45.00" font-size="6.5" fill="#2E9E2E" textLength="10.60" lengthAdjust="spacingAndGlyphs">CH</text><text x="5.70" y="71.00" font-size="7" fill="#2E9E2E" textLength="6.60" lengthAdjust="spacingAndGlyphs">O</text><text x="10.70" y="91.00" font-size="7" fill="#F01E1E" textLength="5.60" lengthAdjust="spacingAndGlyphs">A</text><text x="29.70" y="91.00" font-size="7" fill="#F01E1E" textLength="6.60" lengthAdjust="spacingAndGlyphs">A</text></g><g transform="translate(834.40,161.30)"><path d="M80.00 28.00 L66.00 38.00 L52.00 30.00 L38.00 38.00 L24.00 30.00 L24.00 55.00 L12.00 66.00" fill="none" stroke="#2E9E2E" stroke-width="1.2" stroke-linecap="butt" stroke-linejoin="miter"/><path d="M24.00 55.00 L38.00 66.00 L36.00 75.00" fill="none" stroke="#2E9E2E" stroke-width="1.2" stroke-linecap="butt" stroke-linejoin="miter"/><path d="M36.00 75.00 L33.00 84.00" fill="none" stroke="#F01E1E" stroke-width="1.2" stroke-linecap="butt" stroke-linejoin="miter"/><path d="M11.00 72.00 L14.00 84.00" fill="none" stroke="#F01E1E" stroke-width="1.2" stroke-linecap="butt" stroke-linejoin="miter"/><path d="M84.00 30.00 L94.00 24.00" fill="none" stroke="#2E9E2E" stroke-width="1.2" stroke-linecap="butt" stroke-linejoin="miter"/><path d="M84.00 34.00 L94.00 40.00" fill="none" stroke="#2E9E2E" stroke-width="1.2" stroke-linecap="butt" stroke-linejoin="miter"/><text x="77.70" y="34.00" font-size="7" fill="#2E9E2E" textLength="6.60" lengthAdjust="spacingAndGlyphs">N</text><text x="93.70" y="24.00" font-size="6.5" fill="#2E9E2E" textLength="10.60" lengthAdjust="spacingAndGlyphs">CH</text><text x="93.70" y="45.00" font-size="6.5" fill="#2E9E2E" textLength="10.60" lengthAdjust="spacingAndGlyphs">CH</text><text x="5.70" y="71.00" font-size="7" fill="#2E9E2E" textLength="6.60" lengthAdjust="spacingAndGlyphs">O</text><text x="10.70" y="91.00" font-size="7" fill="#F01E1E" textLength="5.60" lengthAdjust="spacingAndGlyphs">A</text><text x="29.70" y="91.00" font-size="7" fill="#F01E1E" textLength="6.60" lengthAdjust="spacingAndGlyphs">A</text></g><g transform="translate(164.20,273.00)"><path d="M71.80 21.30 L64.30 33.90" fill="none" stroke="#2E9E2E" stroke-width="1.45" stroke-linecap="butt" stroke-linejoin="miter"/><path d="M55.60 39.40 L33.00 39.40 L18.80 64.00 L23.90 73.10" fill="none" stroke="#2E9E2E" stroke-width="1.45" stroke-linecap="butt" stroke-linejoin="miter"/><path d="M23.90 73.10 L29.50 82.50" fill="none" stroke="#F01E1E" stroke-width="1.45" stroke-linecap="butt" stroke-linejoin="miter"/><path d="M64.30 45.30 L75.30 64.00 L69.80 73.70" fill="none" stroke="#2E9E2E" stroke-width="1.45" stroke-linecap="butt" stroke-linejoin="miter"/><path d="M69.80 73.70 L64.70 82.50" fill="none" stroke="#F01E1E" stroke-width="1.45" stroke-linecap="butt" stroke-linejoin="miter"/><text x="70.60" y="17.50" font-size="10.2" fill="#2E9E2E" textLength="15.10" lengthAdjust="spacingAndGlyphs">CH</text><text x="86.10" y="21.30" font-size="7.4" fill="#2E9E2E" textLength="4.50" lengthAdjust="spacingAndGlyphs">3</text><text x="56.60" y="42.70" font-size="10.6" fill="#2E9E2E" textLength="7.70" lengthAdjust="spacingAndGlyphs">N</text><text x="28.40" y="91.80" font-size="10.6" fill="#F01E1E" textLength="7.90" lengthAdjust="spacingAndGlyphs">A</text><text x="56.60" y="91.80" font-size="10.6" fill="#F01E1E" textLength="7.70" lengthAdjust="spacingAndGlyphs">A</text><text x="33.60" y="100.20" font-size="8.8" fill="#2B2B9B" textLength="4.10" lengthAdjust="spacingAndGlyphs">1</text><text x="54.00" y="100.20" font-size="8.8" fill="#2B2B9B" textLength="5.50" lengthAdjust="spacingAndGlyphs">2</text></g><g transform="translate(165.20,384.70)"><path d="M58.80 16.20 L58.80 26.50" fill="none" stroke="#2E9E2E" stroke-width="1.3" stroke-linecap="butt" stroke-linejoin="miter"/><path d="M62.10 34.30 L72.40 40.10" fill="none" stroke="#2E9E2E" stroke-width="1.3" stroke-linecap="butt" stroke-linejoin="miter"/><path d="M54.30 34.30 L40.50 42.00 L40.50 63.40 L27.20 72.40" fill="none" stroke="#2E9E2E" stroke-width="1.3" stroke-linecap="butt" stroke-linejoin="miter"/><path d="M40.50 63.40 L56.90 75.70 L55.00 82.80" fill="none" stroke="#2E9E2E" stroke-width="1.3" stroke-linecap="butt" stroke-linejoin="miter"/><path d="M55.00 82.80 L52.40 89.90" fill="none" stroke="#F01E1E" stroke-width="1.3" stroke-linecap="butt" stroke-linejoin="miter"/><path d="M25.20 80.80 L26.50 85.40" fill="none" stroke="#2E9E2E" stroke-width="1.3" stroke-linecap="butt" stroke-linejoin="miter"/><path d="M26.50 85.40 L28.20 89.90" fill="none" stroke="#F01E1E" stroke-width="1.3" stroke-linecap="butt" stroke-linejoin="miter"/><text x="54.70" y="13.60" font-size="7.2" fill="#2E9E2E" textLength="12.90" lengthAdjust="spacingAndGlyphs">CH</text><text x="67.00" y="16.00" font-size="5.2" fill="#2E9E2E" textLength="2.90" lengthAdjust="spacingAndGlyphs">3</text><text x="72.70" y="45.90" font-size="7.2" fill="#2E9E2E" textLength="12.30" lengthAdjust="spacingAndGlyphs">CH</text><text x="84.40" y="48.30" font-size="5.2" fill="#2E9E2E" textLength="2.80" lengthAdjust="spacingAndGlyphs">3</text><text x="55.30" y="34.90" font-size="8" fill="#2E9E2E" textLength="5.80" lengthAdjust="spacingAndGlyphs">N</text><text x="19.10" y="78.90" font-size="8" fill="#2E9E2E" textLength="6.40" lengthAdjust="spacingAndGlyphs">O</text><text x="25.60" y="98.30" font-size="8" fill="#F01E1E" textLength="6.40" lengthAdjust="spacingAndGlyphs">A</text><text x="46.90" y="98.30" font-size="8" fill="#F01E1E" textLength="6.40" lengthAdjust="spacingAndGlyphs">A</text><text x="29.70" y="102.80" font-size="5.5" fill="#2B2B9B" textLength="2.50" lengthAdjust="spacingAndGlyphs">1</text><text x="46.50" y="103.50" font-size="5.5" fill="#2B2B9B" textLength="3.60" lengthAdjust="spacingAndGlyphs">2</text></g><g transform="translate(165.20,496.40)"><path d="M65.30 26.50 L49.10 17.50 L29.10 28.50 L29.10 52.40 L14.90 62.10" fill="none" stroke="#2E9E2E" stroke-width="1.35" stroke-linecap="butt" stroke-linejoin="miter"/><path d="M29.10 52.40 L47.60 66.00 L45.30 74.40" fill="none" stroke="#2E9E2E" stroke-width="1.35" stroke-linecap="butt" stroke-linejoin="miter"/><path d="M45.30 74.40 L42.00 82.10" fill="none" stroke="#F01E1E" stroke-width="1.35" stroke-linecap="butt" stroke-linejoin="miter"/><path d="M12.30 71.10 L13.60 76.30" fill="none" stroke="#2E9E2E" stroke-width="1.35" stroke-linecap="butt" stroke-linejoin="miter"/><path d="M13.60 76.30 L15.50 81.50" fill="none" stroke="#F01E1E" stroke-width="1.35" stroke-linecap="butt" stroke-linejoin="miter"/><path d="M73.10 26.50 L84.70 20.00" fill="none" stroke="#2E9E2E" stroke-width="1.35" stroke-linecap="butt" stroke-linejoin="miter"/><path d="M68.50 34.90 L68.50 45.90" fill="none" stroke="#2E9E2E" stroke-width="1.35" stroke-linecap="butt" stroke-linejoin="miter"/><text x="5.90" y="67.90" font-size="8.4" fill="#2E9E2E" textLength="7.30" lengthAdjust="spacingAndGlyphs">O</text><text x="65.00" y="31.70" font-size="8.4" fill="#2E9E2E" textLength="6.40" lengthAdjust="spacingAndGlyphs">N</text><text x="84.40" y="20.70" font-size="9" fill="#2E9E2E" textLength="14.20" lengthAdjust="spacingAndGlyphs">CH</text><text x="98.00" y="23.50" font-size="6" fill="#2E9E2E" textLength="3.20" lengthAdjust="spacingAndGlyphs">3</text><text x="64.40" y="54.30" font-size="9" fill="#2E9E2E" textLength="14.10" lengthAdjust="spacingAndGlyphs">CH</text><text x="77.90" y="57.10" font-size="6" fill="#2E9E2E" textLength="3.20" lengthAdjust="spacingAndGlyphs">3</text><text x="13.30" y="90.50" font-size="8.4" fill="#F01E1E" textLength="6.40" lengthAdjust="spacingAndGlyphs">A</text><text x="36.60" y="90.50" font-size="8.4" fill="#F01E1E" textLength="6.40" lengthAdjust="spacingAndGlyphs">A</text><text x="17.20" y="96.40" font-size="6.5" fill="#2B2B9B" textLength="3.00" lengthAdjust="spacingAndGlyphs">1</text><text x="35.70" y="96.40" font-size="6.5" fill="#2B2B9B" textLength="3.60" lengthAdjust="spacingAndGlyphs">2</text></g><g transform="translate(164.20,608.10)"><path d="M77.00 18.10 L77.00 27.80" fill="none" stroke="#2E9E2E" stroke-width="1.3" stroke-linecap="butt" stroke-linejoin="miter"/><path d="M79.50 34.90 L89.90 40.70" fill="none" stroke="#2E9E2E" stroke-width="1.3" stroke-linecap="butt" stroke-linejoin="miter"/><path d="M72.40 34.90 L59.50 42.70 L42.00 33.40 L25.20 42.70 L25.20 62.70 L12.90 71.10" fill="none" stroke="#2E9E2E" stroke-width="1.3" stroke-linecap="butt" stroke-linejoin="miter"/><path d="M25.20 62.70 L41.40 74.40 L39.40 80.80" fill="none" stroke="#2E9E2E" stroke-width="1.3" stroke-linecap="butt" stroke-linejoin="miter"/><path d="M39.40 80.80 L36.90 88.00" fill="none" stroke="#F01E1E" stroke-width="1.3" stroke-linecap="butt" stroke-linejoin="miter"/><path d="M11.60 78.90 L12.30 82.80" fill="none" stroke="#2E9E2E" stroke-width="1.3" stroke-linecap="butt" stroke-linejoin="miter"/><path d="M12.30 82.80 L13.60 88.00" fill="none" stroke="#F01E1E" stroke-width="1.3" stroke-linecap="butt" stroke-linejoin="miter"/><text x="72.70" y="16.20" font-size="6.6" fill="#2E9E2E" textLength="12.30" lengthAdjust="spacingAndGlyphs">CH</text><text x="84.40" y="18.20" font-size="4.6" fill="#2E9E2E" textLength="2.50" lengthAdjust="spacingAndGlyphs">3</text><text x="90.20" y="45.90" font-size="6.6" fill="#2E9E2E" textLength="12.30" lengthAdjust="spacingAndGlyphs">CH</text><text x="101.90" y="47.90" font-size="4.6" fill="#2E9E2E" textLength="2.30" lengthAdjust="spacingAndGlyphs">3</text><text x="73.40" y="35.60" font-size="6.5" fill="#2E9E2E" textLength="5.10" lengthAdjust="spacingAndGlyphs">N</text><text x="5.50" y="77.00" font-size="7" fill="#2E9E2E" textLength="6.40" lengthAdjust="spacingAndGlyphs">O</text><text x="11.60" y="95.10" font-size="7" fill="#F01E1E" textLength="5.50" lengthAdjust="spacingAndGlyphs">A</text><text x="31.40" y="95.10" font-size="7" fill="#F01E1E" textLength="6.40" lengthAdjust="spacingAndGlyphs">A</text><text x="15.00" y="98.90" font-size="5" fill="#2B2B9B" textLength="2.60" lengthAdjust="spacingAndGlyphs">1</text><text x="30.70" y="99.00" font-size="5" fill="#2B2B9B" textLength="3.90" lengthAdjust="spacingAndGlyphs">2</text></g><g transform="translate(164.20,719.80)"><path d="M80.00 28.00 L66.00 38.00 L52.00 30.00 L38.00 38.00 L24.00 30.00 L24.00 55.00 L12.00 66.00" fill="none" stroke="#2E9E2E" stroke-width="1.2" stroke-linecap="butt" stroke-linejoin="miter"/><path d="M24.00 55.00 L38.00 66.00 L36.00 75.00" fill="none" stroke="#2E9E2E" stroke-width="1.2" stroke-linecap="butt" stroke-linejoin="miter"/><path d="M36.00 75.00 L33.00 84.00" fill="none" stroke="#F01E1E" stroke-width="1.2" stroke-linecap="butt" stroke-linejoin="miter"/><path d="M11.00 72.00 L14.00 84.00" fill="none" stroke="#F01E1E" stroke-width="1.2" stroke-linecap="butt" stroke-linejoin="miter"/><path d="M84.00 30.00 L94.00 24.00" fill="none" stroke="#2E9E2E" stroke-width="1.2" stroke-linecap="butt" stroke-linejoin="miter"/><path d="M84.00 34.00 L94.00 40.00" fill="none" stroke="#2E9E2E" stroke-width="1.2" stroke-linecap="butt" stroke-linejoin="miter"/><text x="77.70" y="34.00" font-size="7" fill="#2E9E2E" textLength="6.60" lengthAdjust="spacingAndGlyphs">N</text><text x="93.70" y="24.00" font-size="6.5" fill="#2E9E2E" textLength="10.60" lengthAdjust="spacingAndGlyphs">CH</text><text x="93.70" y="45.00" font-size="6.5" fill="#2E9E2E" textLength="10.60" lengthAdjust="spacingAndGlyphs">CH</text><text x="5.70" y="71.00" font-size="7" fill="#2E9E2E" textLength="6.60" lengthAdjust="spacingAndGlyphs">O</text><text x="10.70" y="91.00" font-size="7" fill="#F01E1E" textLength="5.60" lengthAdjust="spacingAndGlyphs">A</text><text x="29.70" y="91.00" font-size="7" fill="#F01E1E" textLength="6.60" lengthAdjust="spacingAndGlyphs">A</text></g><g transform="translate(164.20,831.50)"><path d="M80.00 28.00 L66.00 38.00 L52.00 30.00 L38.00 38.00 L24.00 30.00 L24.00 55.00 L12.00 66.00" fill="none" stroke="#2E9E2E" stroke-width="1.2" stroke-linecap="butt" stroke-linejoin="miter"/><path d="M24.00 55.00 L38.00 66.00 L36.00 75.00" fill="none" stroke="#2E9E2E" stroke-width="1.2" stroke-linecap="butt" stroke-linejoin="miter"/><path d="M36.00 75.00 L33.00 84.00" fill="none" stroke="#F01E1E" stroke-width="1.2" stroke-linecap="butt" stroke-linejoin="miter"/><path d="M11.00 72.00 L14.00 84.00" fill="none" stroke="#F01E1E" stroke-width="1.2" stroke-linecap="butt" stroke-linejoin="miter"/><path d="M84.00 30.00 L94.00 24.00" fill="none" stroke="#2E9E2E" stroke-width="1.2" stroke-linecap="butt" stroke-linejoin="miter"/><path d="M84.00 34.00 L94.00 40.00" fill="none" stroke="#2E9E2E" stroke-width="1.2" stroke-linecap="butt" stroke-linejoin="miter"/><text x="77.70" y="34.00" font-size="7" fill="#2E9E2E" textLength="6.60" lengthAdjust="spacingAndGlyphs">N</text><text x="93.70" y="24.00" font-size="6.5" fill="#2E9E2E" textLength="10.60" lengthAdjust="spacingAndGlyphs">CH</text><text x="93.70" y="45.00" font-size="6.5" fill="#2E9E2E" textLength="10.60" lengthAdjust="spacingAndGlyphs">CH</text><text x="5.70" y="71.00" font-size="7" fill="#2E9E2E" textLength="6.60" lengthAdjust="spacingAndGlyphs">O</text><text x="10.70" y="91.00" font-size="7" fill="#F01E1E" textLength="5.60" lengthAdjust="spacingAndGlyphs">A</text><text x="29.70" y="91.00" font-size="7" fill="#F01E1E" textLength="6.60" lengthAdjust="spacingAndGlyphs">A</text></g></g></g>
<text x="7" y="160" font-size="15" fill="#D24726" textLength="8" lengthAdjust="spacingAndGlyphs">1</text>
<rect x="20.5" y="148.5" width="261" height="148" fill="none" stroke="#EB6A42" stroke-width="3"/>
<rect x="22" y="150" width="258" height="145" fill="#FFFFFF"/>
<g clip-path="url(#thumbclip)"><g transform="translate(23.65,151.1) scale(0.1666)"><rect x="164.20" y="49.60" width="111.70" height="111.70" fill="#D9D9D9"/><rect x="52.50" y="161.30" width="893.60" height="111.70" fill="#BFBFBF"/><rect x="164.20" y="161.30" width="111.70" height="111.70" fill="#FFFFFF"/><rect x="164.20" y="273.00" width="111.70" height="670.20" fill="#D9D9D9"/><rect x="275.90" y="273.00" width="111.70" height="111.70" fill="#63BE7B"/><rect x="387.60" y="384.70" width="111.70" height="111.70" fill="#CDDC81"/><rect x="499.30" y="496.40" width="111.70" height="111.70" fill="#FFE484"/><rect x="611.00" y="608.10" width="111.70" height="111.70" fill="#FBBD7C"/><rect x="722.70" y="719.80" width="111.70" height="111.70" fill="#FBBB7B"/><rect x="834.40" y="831.50" width="111.70" height="111.70" fill="#F8696B"/><rect x="51.95" y="49.10" width="1.15" height="894.60" fill="#4F81BD"/><rect x="163.95" y="49.10" width="1.15" height="894.60" fill="#4F81BD"/><rect x="275.95" y="49.10" width="1.15" height="894.60" fill="#4F81BD"/><rect x="386.95" y="49.10" width="1.15" height="894.60" fill="#4F81BD"/><rect x="498.95" y="49.10" width="1.15" height="894.60" fill="#4F81BD"/><rect x="610.95" y="49.10" width="1.15" height="894.60" fill="#4F81BD"/><rect x="721.95" y="49.10" width="1.15" height="894.60" fill="#4F81BD"/><rect x="833.95" y="49.10" width="1.15" height="894.60" fill="#4F81BD"/><rect x="945.95" y="49.10" width="1.15" height="894.60" fill="#4F81BD"/><rect x="52.00" y="48.95" width="894.60" height="1.15" fill="#4F81BD"/><rect x="52.00" y="160.95" width="894.60" height="1.15" fill="#4F81BD"/><rect x="52.00" y="272.95" width="894.60" height="1.15" fill="#4F81BD"/><rect x="52.00" y="383.95" width="894.60" height="1.15" fill="#4F81BD"/><rect x="52.00" y="495.95" width="894.60" height="1.15" fill="#4F81BD"/><rect x="52.00" y="607.95" width="894.60" height="1.15" fill="#4F81BD"/><rect x="52.00" y="718.95" width="894.60" height="1.15" fill="#4F81BD"/><rect x="52.00" y="830.95" width="894.60" height="1.15" fill="#4F81BD"/><rect x="52.00" y="942.95" width="894.60" height="1.15" fill="#4F81BD"/><text x="65.00" y="112.60" font-size="19" font-weight="bold" fill="#000" textLength="86" lengthAdjust="spacingAndGlyphs">Solubility</text><text x="193.40" y="116.90" font-size="41.5" fill="#119A11" textLength="47.3" lengthAdjust="spacingAndGlyphs">R1</text><text x="83.30" y="230.20" font-size="39" fill="#1010E0" textLength="47" lengthAdjust="spacingAndGlyphs">R2</text><text x="310.20" y="335.30" font-size="17.2" font-weight="bold" fill="#000" textLength="42.70" lengthAdjust="spacingAndGlyphs">-4.09</text><text x="416.70" y="447.90" font-size="17.2" font-weight="bold" fill="#000" textLength="53.30" lengthAdjust="spacingAndGlyphs">-5.122</text><text x="527.70" y="559.00" font-size="17.2" font-weight="bold" fill="#000" textLength="54.20" lengthAdjust="spacingAndGlyphs">-5.644</text><text x="639.60" y="670.80" font-size="17.2" font-weight="bold" fill="#000" textLength="54.10" lengthAdjust="spacingAndGlyphs">-6.165</text><text x="750.70" y="780.80" font-size="17.2" font-weight="bold" fill="#000">-6.58</text><text x="862.40" y="892.50" font-size="17.2" font-weight="bold" fill="#000">-7.2</text><g transform="translate(164.20,161.30)"><path d="M47.30 42.80 L64.10 42.80 L74.70 56.80 L71.40 74.00 L83.30 85.30 L100.60 80.00 L104.30 63.40 L91.00 51.20 L74.70 56.80" fill="none" stroke="#F03A3A" stroke-width="1.15" stroke-linecap="butt" stroke-linejoin="miter"/><path d="M44.20 45.00 L35.50 56.80 L38.80 74.00 L26.90 85.30 L9.60 80.00 L6.10 63.40 L19.30 51.20 L35.50 56.80" fill="none" stroke="#F03A3A" stroke-width="1.15" stroke-linecap="butt" stroke-linejoin="miter"/><path d="M38.80 74.00 L55.20 80.90 L71.40 74.00" fill="none" stroke="#F03A3A" stroke-width="1.15" stroke-linecap="butt" stroke-linejoin="miter"/><path d="M18.29 55.81 L10.71 62.81" fill="none" stroke="#F03A3A" stroke-width="1.15" stroke-linecap="butt" stroke-linejoin="miter"/><path d="M14.09 78.57 L24.02 81.62" fill="none" stroke="#F03A3A" stroke-width="1.15" stroke-linecap="butt" stroke-linejoin="miter"/><path d="M33.60 61.01 L35.50 70.89" fill="none" stroke="#F03A3A" stroke-width="1.15" stroke-linecap="butt" stroke-linejoin="miter"/><path d="M92.01 55.81 L99.65 62.81" fill="none" stroke="#F03A3A" stroke-width="1.15" stroke-linecap="butt" stroke-linejoin="miter"/><path d="M96.12 78.57 L86.19 81.62" fill="none" stroke="#F03A3A" stroke-width="1.15" stroke-linecap="butt" stroke-linejoin="miter"/><path d="M76.61 61.01 L74.71 70.89" fill="none" stroke="#F03A3A" stroke-width="1.15" stroke-linecap="butt" stroke-linejoin="miter"/><path d="M44.10 39.80 L42.80 36.15" fill="none" stroke="#F03A3A" stroke-width="1.15" stroke-linecap="butt" stroke-linejoin="miter"/><path d="M42.80 36.15 L41.50 32.50" fill="none" stroke="#2E9E2E" stroke-width="1.15" stroke-linecap="butt" stroke-linejoin="miter"/><path d="M65.40 39.80 L70.00 31.90" fill="none" stroke="#3535E8" stroke-width="1.15" stroke-linecap="butt" stroke-linejoin="miter"/><text x="42.60" y="46.30" font-size="5.8" fill="#F03A3A" textLength="6.00" lengthAdjust="spacingAndGlyphs">N</text><text x="33.90" y="29.60" font-size="5.8" fill="#2E9E2E" textLength="8.60" lengthAdjust="spacingAndGlyphs">R1</text><text x="67.00" y="29.60" font-size="5.8" fill="#3535E8" textLength="8.60" lengthAdjust="spacingAndGlyphs">R2</text></g><g transform="translate(275.90,161.30)"><path d="M71.80 21.30 L64.30 33.90" fill="none" stroke="#2E9E2E" stroke-width="1.45" stroke-linecap="butt" stroke-linejoin="miter"/><path d="M55.60 39.40 L33.00 39.40 L18.80 64.00 L23.90 73.10" fill="none" stroke="#2E9E2E" stroke-width="1.45" stroke-linecap="butt" stroke-linejoin="miter"/><path d="M23.90 73.10 L29.50 82.50" fill="none" stroke="#F01E1E" stroke-width="1.45" stroke-linecap="butt" stroke-linejoin="miter"/><path d="M64.30 45.30 L75.30 64.00 L69.80 73.70" fill="none" stroke="#2E9E2E" stroke-width="1.45" stroke-linecap="butt" stroke-linejoin="miter"/><path d="M69.80 73.70 L64.70 82.50" fill="none" stroke="#F01E1E" stroke-width="1.45" stroke-linecap="butt" stroke-linejoin="miter"/><text x="70.60" y="17.50" font-size="10.2" fill="#2E9E2E" textLength="15.10" lengthAdjust="spacingAndGlyphs">CH</text><text x="86.10" y="21.30" font-size="7.4" fill="#2E9E2E" textLength="4.50" lengthAdjust="spacingAndGlyphs">3</text><text x="56.60" y="42.70" font-size="10.6" fill="#2E9E2E" textLength="7.70" lengthAdjust="spacingAndGlyphs">N</text><text x="28.40" y="91.80" font-size="10.6" fill="#F01E1E" textLength="7.90" lengthAdjust="spacingAndGlyphs">A</text><text x="56.60" y="91.80" font-size="10.6" fill="#F01E1E" textLength="7.70" lengthAdjust="spacingAndGlyphs">A</text><text x="33.60" y="100.20" font-size="8.8" fill="#2B2B9B" textLength="4.10" lengthAdjust="spacingAndGlyphs">1</text><text x="54.00" y="100.20" font-size="8.8" fill="#2B2B9B" textLength="5.50" lengthAdjust="spacingAndGlyphs">2</text></g><g transform="translate(387.60,161.30)"><path d="M58.80 16.20 L58.80 26.50" fill="none" stroke="#2E9E2E" stroke-width="1.3" stroke-linecap="butt" stroke-linejoin="miter"/><path d="M62.10 34.30 L72.40 40.10" fill="none" stroke="#2E9E2E" stroke-width="1.3" stroke-linecap="butt" stroke-linejoin="miter"/><path d="M54.30 34.30 L40.50 42.00 L40.50 63.40 L27.20 72.40" fill="none" stroke="#2E9E2E" stroke-width="1.3" stroke-linecap="butt" stroke-linejoin="miter"/><path d="M40.50 63.40 L56.90 75.70 L55.00 82.80" fill="none" stroke="#2E9E2E" stroke-width="1.3" stroke-linecap="butt" stroke-linejoin="miter"/><path d="M55.00 82.80 L52.40 89.90" fill="none" stroke="#F01E1E" stroke-width="1.3" stroke-linecap="butt" stroke-linejoin="miter"/><path d="M25.20 80.80 L26.50 85.40" fill="none" stroke="#2E9E2E" stroke-width="1.3" stroke-linecap="butt" stroke-linejoin="miter"/><path d="M26.50 85.40 L28.20 89.90" fill="none" stroke="#F01E1E" stroke-width="1.3" stroke-linecap="butt" stroke-linejoin="miter"/><text x="54.70" y="13.60" font-size="7.2" fill="#2E9E2E" textLength="12.90" lengthAdjust="spacingAndGlyphs">CH</text><text x="67.00" y="16.00" font-size="5.2" fill="#2E9E2E" textLength="2.90" lengthAdjust="spacingAndGlyphs">3</text><text x="72.70" y="45.90" font-size="7.2" fill="#2E9E2E" textLength="12.30" lengthAdjust="spacingAndGlyphs">CH</text><text x="84.40" y="48.30" font-size="5.2" fill="#2E9E2E" textLength="2.80" lengthAdjust="spacingAndGlyphs">3</text><text x="55.30" y="34.90" font-size="8" fill="#2E9E2E" textLength="5.80" lengthAdjust="spacingAndGlyphs">N</text><text x="19.10" y="78.90" font-size="8" fill="#2E9E2E" textLength="6.40" lengthAdjust="spacingAndGlyphs">O</text><text x="25.60" y="98.30" font-size="8" fill="#F01E1E" textLength="6.40" lengthAdjust="spacingAndGlyphs">A</text><text x="46.90" y="98.30" font-size="8" fill="#F01E1E" textLength="6.40" lengthAdjust="spacingAndGlyphs">A</text><text x="29.70" y="102.80" font-size="5.5" fill="#2B2B9B" textLength="2.50" lengthAdjust="spacingAndGlyphs">1</text><text x="46.50" y="103.50" font-size="5.5" fill="#2B2B9B" textLength="3.60" lengthAdjust="spacingAndGlyphs">2</text></g><g transform="translate(499.30,161.30)"><path d="M65.30 26.50 L49.10 17.50 L29.10 28.50 L29.10 52.40 L14.90 62.10" fill="none" stroke="#2E9E2E" stroke-width="1.35" stroke-linecap="butt" stroke-linejoin="miter"/><path d="M29.10 52.40 L47.60 66.00 L45.30 74.40" fill="none" stroke="#2E9E2E" stroke-width="1.35" stroke-linecap="butt" stroke-linejoin="miter"/><path d="M45.30 74.40 L42.00 82.10" fill="none" stroke="#F01E1E" stroke-width="1.35" stroke-linecap="butt" stroke-linejoin="miter"/><path d="M12.30 71.10 L13.60 76.30" fill="none" stroke="#2E9E2E" stroke-width="1.35" stroke-linecap="butt" stroke-linejoin="miter"/><path d="M13.60 76.30 L15.50 81.50" fill="none" stroke="#F01E1E" stroke-width="1.35" stroke-linecap="butt" stroke-linejoin="miter"/><path d="M73.10 26.50 L84.70 20.00" fill="none" stroke="#2E9E2E" stroke-width="1.35" stroke-linecap="butt" stroke-linejoin="miter"/><path d="M68.50 34.90 L68.50 45.90" fill="none" stroke="#2E9E2E" stroke-width="1.35" stroke-linecap="butt" stroke-linejoin="miter"/><text x="5.90" y="67.90" font-size="8.4" fill="#2E9E2E" textLength="7.30" lengthAdjust="spacingAndGlyphs">O</text><text x="65.00" y="31.70" font-size="8.4" fill="#2E9E2E" textLength="6.40" lengthAdjust="spacingAndGlyphs">N</text><text x="84.40" y="20.70" font-size="9" fill="#2E9E2E" textLength="14.20" lengthAdjust="spacingAndGlyphs">CH</text><text x="98.00" y="23.50" font-size="6" fill="#2E9E2E" textLength="3.20" lengthAdjust="spacingAndGlyphs">3</text><text x="64.40" y="54.30" font-size="9" fill="#2E9E2E" textLength="14.10" lengthAdjust="spacingAndGlyphs">CH</text><text x="77.90" y="57.10" font-size="6" fill="#2E9E2E" textLength="3.20" lengthAdjust="spacingAndGlyphs">3</text><text x="13.30" y="90.50" font-size="8.4" fill="#F01E1E" textLength="6.40" lengthAdjust="spacingAndGlyphs">A</text><text x="36.60" y="90.50" font-size="8.4" fill="#F01E1E" textLength="6.40" lengthAdjust="spacingAndGlyphs">A</text><text x="17.20" y="96.40" font-size="6.5" fill="#2B2B9B" textLength="3.00" lengthAdjust="spacingAndGlyphs">1</text><text x="35.70" y="96.40" font-size="6.5" fill="#2B2B9B" textLength="3.60" lengthAdjust="spacingAndGlyphs">2</text></g><g transform="translate(611.00,161.30)"><path d="M77.00 18.10 L77.00 27.80" fill="none" stroke="#2E9E2E" stroke-width="1.3" stroke-linecap="butt" stroke-linejoin="miter"/><path d="M79.50 34.90 L89.90 40.70" fill="none" stroke="#2E9E2E" stroke-width="1.3" stroke-linecap="butt" stroke-linejoin="miter"/><path d="M72.40 34.90 L59.50 42.70 L42.00 33.40 L25.20 42.70 L25.20 62.70 L12.90 71.10" fill="none" stroke="#2E9E2E" stroke-width="1.3" stroke-linecap="butt" stroke-linejoin="miter"/><path d="M25.20 62.70 L41.40 74.40 L39.40 80.80" fill="none" stroke="#2E9E2E" stroke-width="1.3" stroke-linecap="butt" stroke-linejoin="miter"/><path d="M39.40 80.80 L36.90 88.00" fill="none" stroke="#F01E1E" stroke-width="1.3" stroke-linecap="butt" stroke-linejoin="miter"/><path d="M11.60 78.90 L12.30 82.80" fill="none" stroke="#2E9E2E" stroke-width="1.3" stroke-linecap="butt" stroke-linejoin="miter"/><path d="M12.30 82.80 L13.60 88.00" fill="none" stroke="#F01E1E" stroke-width="1.3" stroke-linecap="butt" stroke-linejoin="miter"/><text x="72.70" y="16.20" font-size="6.6" fill="#2E9E2E" textLength="12.30" lengthAdjust="spacingAndGlyphs">CH</text><text x="84.40" y="18.20" font-size="4.6" fill="#2E9E2E" textLength="2.50" lengthAdjust="spacingAndGlyphs">3</text><text x="90.20" y="45.90" font-size="6.6" fill="#2E9E2E" textLength="12.30" lengthAdjust="spacingAndGlyphs">CH</text><text x="101.90" y="47.90" font-size="4.6" fill="#2E9E2E" textLength="2.30" lengthAdjust="spacingAndGlyphs">3</text><text x="73.40" y="35.60" font-size="6.5" fill="#2E9E2E" textLength="5.10" lengthAdjust="spacingAndGlyphs">N</text><text x="5.50" y="77.00" font-size="7" fill="#2E9E2E" textLength="6.40" lengthAdjust="spacingAndGlyphs">O</text><text x="11.60" y="95.10" font-size="7" fill="#F01E1E" textLength="5.50" lengthAdjust="spacingAndGlyphs">A</text><text x="31.40" y="95.10" font-size="7" fill="#F01E1E" textLength="6.40" lengthAdjust="spacingAndGlyphs">A</text><text x="15.00" y="98.90" font-size="5" fill="#2B2B9B" textLength="2.60" lengthAdjust="spacingAndGlyphs">1</text><text x="30.70" y="99.00" font-size="5" fill="#2B2B9B" textLength="3.90" lengthAdjust="spacingAndGlyphs">2</text></g><g transform="translate(722.70,161.30)"><path d="M80.00 28.00 L66.00 38.00 L52.00 30.00 L38.00 38.00 L24.00 30.00 L24.00 55.00 L12.00 66.00" fill="none" stroke="#2E9E2E" stroke-width="1.2" stroke-linecap="butt" stroke-linejoin="miter"/><path d="M24.00 55.00 L38.00 66.00 L36.00 75.00" fill="none" stroke="#2E9E2E" stroke-width="1.2" stroke-linecap="butt" stroke-linejoin="miter"/><path d="M36.00 75.00 L33.00 84.00" fill="none" stroke="#F01E1E" stroke-width="1.2" stroke-linecap="butt" stroke-linejoin="miter"/><path d="M11.00 72.00 L14.00 84.00" fill="none" stroke="#F01E1E" stroke-width="1.2" stroke-linecap="butt" stroke-linejoin="miter"/><path d="M84.00 30.00 L94.00 24.00" fill="none" stroke="#2E9E2E" stroke-width="1.2" stroke-linecap="butt" stroke-linejoin="miter"/><path d="M84.00 34.00 L94.00 40.00" fill="none" stroke="#2E9E2E" stroke-width="1.2" stroke-linecap="butt" stroke-linejoin="miter"/><text x="77.70" y="34.00" font-size="7" fill="#2E9E2E" textLength="6.60" lengthAdjust="spacingAndGlyphs">N</text><text x="93.70" y="24.00" font-size="6.5" fill="#2E9E2E" textLength="10.60" lengthAdjust="spacingAndGlyphs">CH</text><text x="93.70" y="45.00" font-size="6.5" fill="#2E9E2E" textLength="10.60" lengthAdjust="spacingAndGlyphs">CH</text><text x="5.70" y="71.00" font-size="7" fill="#2E9E2E" textLength="6.60" lengthAdjust="spacingAndGlyphs">O</text><text x="10.70" y="91.00" font-size="7" fill="#F01E1E" textLength="5.60" lengthAdjust="spacingAndGlyphs">A</text><text x="29.70" y="91.00" font-size="7" fill="#F01E1E" textLength="6.60" lengthAdjust="spacingAndGlyphs">A</text></g><g transform="translate(834.40,161.30)"><path d="M80.00 28.00 L66.00 38.00 L52.00 30.00 L38.00 38.00 L24.00 30.00 L24.00 55.00 L12.00 66.00" fill="none" stroke="#2E9E2E" stroke-width="1.2" stroke-linecap="butt" stroke-linejoin="miter"/><path d="M24.00 55.00 L38.00 66.00 L36.00 75.00" fill="none" stroke="#2E9E2E" stroke-width="1.2" stroke-linecap="butt" stroke-linejoin="miter"/><path d="M36.00 75.00 L33.00 84.00" fill="none" stroke="#F01E1E" stroke-width="1.2" stroke-linecap="butt" stroke-linejoin="miter"/><path d="M11.00 72.00 L14.00 84.00" fill="none" stroke="#F01E1E" stroke-width="1.2" stroke-linecap="butt" stroke-linejoin="miter"/><path d="M84.00 30.00 L94.00 24.00" fill="none" stroke="#2E9E2E" stroke-width="1.2" stroke-linecap="butt" stroke-linejoin="miter"/><path d="M84.00 34.00 L94.00 40.00" fill="none" stroke="#2E9E2E" stroke-width="1.2" stroke-linecap="butt" stroke-linejoin="miter"/><text x="77.70" y="34.00" font-size="7" fill="#2E9E2E" textLength="6.60" lengthAdjust="spacingAndGlyphs">N</text><text x="93.70" y="24.00" font-size="6.5" fill="#2E9E2E" textLength="10.60" lengthAdjust="spacingAndGlyphs">CH</text><text x="93.70" y="45.00" font-size="6.5" fill="#2E9E2E" textLength="10.60" lengthAdjust="spacingAndGlyphs">CH</text><text x="5.70" y="71.00" font-size="7" fill="#2E9E2E" textLength="6.60" lengthAdjust="spacingAndGlyphs">O</text><text x="10.70" y="91.00" font-size="7" fill="#F01E1E" textLength="5.60" lengthAdjust="spacingAndGlyphs">A</text><text x="29.70" y="91.00" font-size="7" fill="#F01E1E" textLength="6.60" lengthAdjust="spacingAndGlyphs">A</text></g><g transform="translate(164.20,273.00)"><path d="M71.80 21.30 L64.30 33.90" fill="none" stroke="#2E9E2E" stroke-width="1.45" stroke-linecap="butt" stroke-linejoin="miter"/><path d="M55.60 39.40 L33.00 39.40 L18.80 64.00 L23.90 73.10" fill="none" stroke="#2E9E2E" stroke-width="1.45" stroke-linecap="butt" stroke-linejoin="miter"/><path d="M23.90 73.10 L29.50 82.50" fill="none" stroke="#F01E1E" stroke-width="1.45" stroke-linecap="butt" stroke-linejoin="miter"/><path d="M64.30 45.30 L75.30 64.00 L69.80 73.70" fill="none" stroke="#2E9E2E" stroke-width="1.45" stroke-linecap="butt" stroke-linejoin="miter"/><path d="M69.80 73.70 L64.70 82.50" fill="none" stroke="#F01E1E" stroke-width="1.45" stroke-linecap="butt" stroke-linejoin="miter"/><text x="70.60" y="17.50" font-size="10.2" fill="#2E9E2E" textLength="15.10" lengthAdjust="spacingAndGlyphs">CH</text><text x="86.10" y="21.30" font-size="7.4" fill="#2E9E2E" textLength="4.50" lengthAdjust="spacingAndGlyphs">3</text><text x="56.60" y="42.70" font-size="10.6" fill="#2E9E2E" textLength="7.70" lengthAdjust="spacingAndGlyphs">N</text><text x="28.40" y="91.80" font-size="10.6" fill="#F01E1E" textLength="7.90" lengthAdjust="spacingAndGlyphs">A</text><text x="56.60" y="91.80" font-size="10.6" fill="#F01E1E" textLength="7.70" lengthAdjust="spacingAndGlyphs">A</text><text x="33.60" y="100.20" font-size="8.8" fill="#2B2B9B" textLength="4.10" lengthAdjust="spacingAndGlyphs">1</text><text x="54.00" y="100.20" font-size="8.8" fill="#2B2B9B" textLength="5.50" lengthAdjust="spacingAndGlyphs">2</text></g><g transform="translate(165.20,384.70)"><path d="M58.80 16.20 L58.80 26.50" fill="none" stroke="#2E9E2E" stroke-width="1.3" stroke-linecap="butt" stroke-linejoin="miter"/><path d="M62.10 34.30 L72.40 40.10" fill="none" stroke="#2E9E2E" stroke-width="1.3" stroke-linecap="butt" stroke-linejoin="miter"/><path d="M54.30 34.30 L40.50 42.00 L40.50 63.40 L27.20 72.40" fill="none" stroke="#2E9E2E" stroke-width="1.3" stroke-linecap="butt" stroke-linejoin="miter"/><path d="M40.50 63.40 L56.90 75.70 L55.00 82.80" fill="none" stroke="#2E9E2E" stroke-width="1.3" stroke-linecap="butt" stroke-linejoin="miter"/><path d="M55.00 82.80 L52.40 89.90" fill="none" stroke="#F01E1E" stroke-width="1.3" stroke-linecap="butt" stroke-linejoin="miter"/><path d="M25.20 80.80 L26.50 85.40" fill="none" stroke="#2E9E2E" stroke-width="1.3" stroke-linecap="butt" stroke-linejoin="miter"/><path d="M26.50 85.40 L28.20 89.90" fill="none" stroke="#F01E1E" stroke-width="1.3" stroke-linecap="butt" stroke-linejoin="miter"/><text x="54.70" y="13.60" font-size="7.2" fill="#2E9E2E" textLength="12.90" lengthAdjust="spacingAndGlyphs">CH</text><text x="67.00" y="16.00" font-size="5.2" fill="#2E9E2E" textLength="2.90" lengthAdjust="spacingAndGlyphs">3</text><text x="72.70" y="45.90" font-size="7.2" fill="#2E9E2E" textLength="12.30" lengthAdjust="spacingAndGlyphs">CH</text><text x="84.40" y="48.30" font-size="5.2" fill="#2E9E2E" textLength="2.80" lengthAdjust="spacingAndGlyphs">3</text><text x="55.30" y="34.90" font-size="8" fill="#2E9E2E" textLength="5.80" lengthAdjust="spacingAndGlyphs">N</text><text x="19.10" y="78.90" font-size="8" fill="#2E9E2E" textLength="6.40" lengthAdjust="spacingAndGlyphs">O</text><text x="25.60" y="98.30" font-size="8" fill="#F01E1E" textLength="6.40" lengthAdjust="spacingAndGlyphs">A</text><text x="46.90" y="98.30" font-size="8" fill="#F01E1E" textLength="6.40" lengthAdjust="spacingAndGlyphs">A</text><text x="29.70" y="102.80" font-size="5.5" fill="#2B2B9B" textLength="2.50" lengthAdjust="spacingAndGlyphs">1</text><text x="46.50" y="103.50" font-size="5.5" fill="#2B2B9B" textLength="3.60" lengthAdjust="spacingAndGlyphs">2</text></g><g transform="translate(165.20,496.40)"><path d="M65.30 26.50 L49.10 17.50 L29.10 28.50 L29.10 52.40 L14.90 62.10" fill="none" stroke="#2E9E2E" stroke-width="1.35" stroke-linecap="butt" stroke-linejoin="miter"/><path d="M29.10 52.40 L47.60 66.00 L45.30 74.40" fill="none" stroke="#2E9E2E" stroke-width="1.35" stroke-linecap="butt" stroke-linejoin="miter"/><path d="M45.30 74.40 L42.00 82.10" fill="none" stroke="#F01E1E" stroke-width="1.35" stroke-linecap="butt" stroke-linejoin="miter"/><path d="M12.30 71.10 L13.60 76.30" fill="none" stroke="#2E9E2E" stroke-width="1.35" stroke-linecap="butt" stroke-linejoin="miter"/><path d="M13.60 76.30 L15.50 81.50" fill="none" stroke="#F01E1E" stroke-width="1.35" stroke-linecap="butt" stroke-linejoin="miter"/><path d="M73.10 26.50 L84.70 20.00" fill="none" stroke="#2E9E2E" stroke-width="1.35" stroke-linecap="butt" stroke-linejoin="miter"/><path d="M68.50 34.90 L68.50 45.90" fill="none" stroke="#2E9E2E" stroke-width="1.35" stroke-linecap="butt" stroke-linejoin="miter"/><text x="5.90" y="67.90" font-size="8.4" fill="#2E9E2E" textLength="7.30" lengthAdjust="spacingAndGlyphs">O</text><text x="65.00" y="31.70" font-size="8.4" fill="#2E9E2E" textLength="6.40" lengthAdjust="spacingAndGlyphs">N</text><text x="84.40" y="20.70" font-size="9" fill="#2E9E2E" textLength="14.20" lengthAdjust="spacingAndGlyphs">CH</text><text x="98.00" y="23.50" font-size="6" fill="#2E9E2E" textLength="3.20" lengthAdjust="spacingAndGlyphs">3</text><text x="64.40" y="54.30" font-size="9" fill="#2E9E2E" textLength="14.10" lengthAdjust="spacingAndGlyphs">CH</text><text x="77.90" y="57.10" font-size="6" fill="#2E9E2E" textLength="3.20" lengthAdjust="spacingAndGlyphs">3</text><text x="13.30" y="90.50" font-size="8.4" fill="#F01E1E" textLength="6.40" lengthAdjust="spacingAndGlyphs">A</text><text x="36.60" y="90.50" font-size="8.4" fill="#F01E1E" textLength="6.40" lengthAdjust="spacingAndGlyphs">A</text><text x="17.20" y="96.40" font-size="6.5" fill="#2B2B9B" textLength="3.00" lengthAdjust="spacingAndGlyphs">1</text><text x="35.70" y="96.40" font-size="6.5" fill="#2B2B9B" textLength="3.60" lengthAdjust="spacingAndGlyphs">2</text></g><g transform="translate(164.20,608.10)"><path d="M77.00 18.10 L77.00 27.80" fill="none" stroke="#2E9E2E" stroke-width="1.3" stroke-linecap="butt" stroke-linejoin="miter"/><path d="M79.50 34.90 L89.90 40.70" fill="none" stroke="#2E9E2E" stroke-width="1.3" stroke-linecap="butt" stroke-linejoin="miter"/><path d="M72.40 34.90 L59.50 42.70 L42.00 33.40 L25.20 42.70 L25.20 62.70 L12.90 71.10" fill="none" stroke="#2E9E2E" stroke-width="1.3" stroke-linecap="butt" stroke-linejoin="miter"/><path d="M25.20 62.70 L41.40 74.40 L39.40 80.80" fill="none" stroke="#2E9E2E" stroke-width="1.3" stroke-linecap="butt" stroke-linejoin="miter"/><path d="M39.40 80.80 L36.90 88.00" fill="none" stroke="#F01E1E" stroke-width="1.3" stroke-linecap="butt" stroke-linejoin="miter"/><path d="M11.60 78.90 L12.30 82.80" fill="none" stroke="#2E9E2E" stroke-width="1.3" stroke-linecap="butt" stroke-linejoin="miter"/><path d="M12.30 82.80 L13.60 88.00" fill="none" stroke="#F01E1E" stroke-width="1.3" stroke-linecap="butt" stroke-linejoin="miter"/><text x="72.70" y="16.20" font-size="6.6" fill="#2E9E2E" textLength="12.30" lengthAdjust="spacingAndGlyphs">CH</text><text x="84.40" y="18.20" font-size="4.6" fill="#2E9E2E" textLength="2.50" lengthAdjust="spacingAndGlyphs">3</text><text x="90.20" y="45.90" font-size="6.6" fill="#2E9E2E" textLength="12.30" lengthAdjust="spacingAndGlyphs">CH</text><text x="101.90" y="47.90" font-size="4.6" fill="#2E9E2E" textLength="2.30" lengthAdjust="spacingAndGlyphs">3</text><text x="73.40" y="35.60" font-size="6.5" fill="#2E9E2E" textLength="5.10" lengthAdjust="spacingAndGlyphs">N</text><text x="5.50" y="77.00" font-size="7" fill="#2E9E2E" textLength="6.40" lengthAdjust="spacingAndGlyphs">O</text><text x="11.60" y="95.10" font-size="7" fill="#F01E1E" textLength="5.50" lengthAdjust="spacingAndGlyphs">A</text><text x="31.40" y="95.10" font-size="7" fill="#F01E1E" textLength="6.40" lengthAdjust="spacingAndGlyphs">A</text><text x="15.00" y="98.90" font-size="5" fill="#2B2B9B" textLength="2.60" lengthAdjust="spacingAndGlyphs">1</text><text x="30.70" y="99.00" font-size="5" fill="#2B2B9B" textLength="3.90" lengthAdjust="spacingAndGlyphs">2</text></g><g transform="translate(164.20,719.80)"><path d="M80.00 28.00 L66.00 38.00 L52.00 30.00 L38.00 38.00 L24.00 30.00 L24.00 55.00 L12.00 66.00" fill="none" stroke="#2E9E2E" stroke-width="1.2" stroke-linecap="butt" stroke-linejoin="miter"/><path d="M24.00 55.00 L38.00 66.00 L36.00 75.00" fill="none" stroke="#2E9E2E" stroke-width="1.2" stroke-linecap="butt" stroke-linejoin="miter"/><path d="M36.00 75.00 L33.00 84.00" fill="none" stroke="#F01E1E" stroke-width="1.2" stroke-linecap="butt" stroke-linejoin="miter"/><path d="M11.00 72.00 L14.00 84.00" fill="none" stroke="#F01E1E" stroke-width="1.2" stroke-linecap="butt" stroke-linejoin="miter"/><path d="M84.00 30.00 L94.00 24.00" fill="none" stroke="#2E9E2E" stroke-width="1.2" stroke-linecap="butt" stroke-linejoin="miter"/><path d="M84.00 34.00 L94.00 40.00" fill="none" stroke="#2E9E2E" stroke-width="1.2" stroke-linecap="butt" stroke-linejoin="miter"/><text x="77.70" y="34.00" font-size="7" fill="#2E9E2E" textLength="6.60" lengthAdjust="spacingAndGlyphs">N</text><text x="93.70" y="24.00" font-size="6.5" fill="#2E9E2E" textLength="10.60" lengthAdjust="spacingAndGlyphs">CH</text><text x="93.70" y="45.00" font-size="6.5" fill="#2E9E2E" textLength="10.60" lengthAdjust="spacingAndGlyphs">CH</text><text x="5.70" y="71.00" font-size="7" fill="#2E9E2E" textLength="6.60" lengthAdjust="spacingAndGlyphs">O</text><text x="10.70" y="91.00" font-size="7" fill="#F01E1E" textLength="5.60" lengthAdjust="spacingAndGlyphs">A</text><text x="29.70" y="91.00" font-size="7" fill="#F01E1E" textLength="6.60" lengthAdjust="spacingAndGlyphs">A</text></g><g transform="translate(164.20,831.50)"><path d="M80.00 28.00 L66.00 38.00 L52.00 30.00 L38.00 38.00 L24.00 30.00 L24.00 55.00 L12.00 66.00" fill="none" stroke="#2E9E2E" stroke-width="1.2" stroke-linecap="butt" stroke-linejoin="miter"/><path d="M24.00 55.00 L38.00 66.00 L36.00 75.00" fill="none" stroke="#2E9E2E" stroke-width="1.2" stroke-linecap="butt" stroke-linejoin="miter"/><path d="M36.00 75.00 L33.00 84.00" fill="none" stroke="#F01E1E" stroke-width="1.2" stroke-linecap="butt" stroke-linejoin="miter"/><path d="M11.00 72.00 L14.00 84.00" fill="none" stroke="#F01E1E" stroke-width="1.2" stroke-linecap="butt" stroke-linejoin="miter"/><path d="M84.00 30.00 L94.00 24.00" fill="none" stroke="#2E9E2E" stroke-width="1.2" stroke-linecap="butt" stroke-linejoin="miter"/><path d="M84.00 34.00 L94.00 40.00" fill="none" stroke="#2E9E2E" stroke-width="1.2" stroke-linecap="butt" stroke-linejoin="miter"/><text x="77.70" y="34.00" font-size="7" fill="#2E9E2E" textLength="6.60" lengthAdjust="spacingAndGlyphs">N</text><text x="93.70" y="24.00" font-size="6.5" fill="#2E9E2E" textLength="10.60" lengthAdjust="spacingAndGlyphs">CH</text><text x="93.70" y="45.00" font-size="6.5" fill="#2E9E2E" textLength="10.60" lengthAdjust="spacingAndGlyphs">CH</text><text x="5.70" y="71.00" font-size="7" fill="#2E9E2E" textLength="6.60" lengthAdjust="spacingAndGlyphs">O</text><text x="10.70" y="91.00" font-size="7" fill="#F01E1E" textLength="5.60" lengthAdjust="spacingAndGlyphs">A</text><text x="29.70" y="91.00" font-size="7" fill="#F01E1E" textLength="6.60" lengthAdjust="spacingAndGlyphs">A</text></g></g>
<rect x="31.80" y="158.8" width="1.2" height="140" fill="#4F81BD"/>
<rect x="50.41" y="158.8" width="1.2" height="140" fill="#4F81BD"/>
<rect x="69.02" y="158.8" width="1.2" height="140" fill="#4F81BD"/>
<rect x="87.63" y="158.8" width="1.2" height="140" fill="#4F81BD"/>
<rect x="106.24" y="158.8" width="1.2" height="140" fill="#4F81BD"/>
<rect x="124.85" y="158.8" width="1.2" height="140" fill="#4F81BD"/>
<rect x="143.46" y="158.8" width="1.2" height="140" fill="#4F81BD"/>
<rect x="162.06" y="158.8" width="1.2" height="140" fill="#4F81BD"/>
<rect x="180.67" y="158.8" width="1.2" height="140" fill="#4F81BD"/>
<rect x="31.8" y="158.80" width="150.07" height="1.2" fill="#4F81BD"/>
<rect x="31.8" y="177.41" width="150.07" height="1.2" fill="#4F81BD"/>
<rect x="31.8" y="196.02" width="150.07" height="1.2" fill="#4F81BD"/>
<rect x="31.8" y="214.63" width="150.07" height="1.2" fill="#4F81BD"/>
<rect x="31.8" y="233.24" width="150.07" height="1.2" fill="#4F81BD"/>
<rect x="31.8" y="251.85" width="150.07" height="1.2" fill="#4F81BD"/>
<rect x="31.8" y="270.46" width="150.07" height="1.2" fill="#4F81BD"/>
<rect x="31.8" y="289.06" width="150.07" height="1.2" fill="#4F81BD"/>
<rect x="31.8" y="307.67" width="150.07" height="1.2" fill="#4F81BD"/>
</g>
<path d="M378.5 184.5 H1289.5 V866 M378.5 184.5 V866" fill="none" stroke="#A8A8A8" stroke-width="1" stroke-dasharray="2 2"/>
<rect x="610.90" y="304.70" width="111.70" height="111.70" fill="none" stroke="#8C8C8C" stroke-width="1"/>
<line x1="666.75" y1="280" x2="666.75" y2="305.3" stroke="#9A9A9A" stroke-width="1.2"/>
<path d="M673.05 276.5 A8.8 8.8 0 1 1 675.05 268.0" fill="none" stroke="#9A9A9A" stroke-width="5"/>
<path d="M673.05 276.5 A8.8 8.8 0 1 1 675.05 268.0" fill="none" stroke="#FFFFFF" stroke-width="1.8"/>
<path d="M668.25 268.7 L681.25 268.7 L674.55 275.5 Z" fill="#FFFFFF" stroke="#9A9A9A" stroke-width="1.7"/>
<circle cx="610.9" cy="304.6" r="4.5" fill="#FFFFFF" stroke="#9A9A9A" stroke-width="1.9"/>
<circle cx="610.9" cy="417.0" r="4.5" fill="#FFFFFF" stroke="#9A9A9A" stroke-width="1.9"/>
<circle cx="666.75" cy="304.6" r="4.5" fill="#FFFFFF" stroke="#9A9A9A" stroke-width="1.9"/>
<circle cx="666.75" cy="417.0" r="4.5" fill="#FFFFFF" stroke="#9A9A9A" stroke-width="1.9"/>
<circle cx="722.6" cy="304.6" r="4.5" fill="#FFFFFF" stroke="#9A9A9A" stroke-width="1.9"/>
<circle cx="722.6" cy="417.0" r="4.5" fill="#FFFFFF" stroke="#9A9A9A" stroke-width="1.9"/>
<circle cx="610.9" cy="361.15" r="4.5" fill="#FFFFFF" stroke="#9A9A9A" stroke-width="1.9"/>
<circle cx="722.6" cy="361.15" r="4.5" fill="#FFFFFF" stroke="#9A9A9A" stroke-width="1.9"/>
<line x1="834" y1="161" x2="834" y2="184" stroke="#9A9A9A" stroke-width="1.2"/>
<path d="M840.3 157.3 A8.8 8.8 0 1 1 842.3 148.8" fill="none" stroke="#9A9A9A" stroke-width="5"/>
<path d="M840.3 157.3 A8.8 8.8 0 1 1 842.3 148.8" fill="none" stroke="#FFFFFF" stroke-width="1.8"/>
<path d="M835.5 149.5 L848.5 149.5 L841.8 156.3 Z" fill="#FFFFFF" stroke="#9A9A9A" stroke-width="1.7"/>
<circle cx="378.5" cy="184.5" r="4.5" fill="#FFFFFF" stroke="#9A9A9A" stroke-width="1.9"/>
<circle cx="834" cy="184.5" r="4.5" fill="#FFFFFF" stroke="#9A9A9A" stroke-width="1.9"/>
<circle cx="378.5" cy="639" r="4.5" fill="#FFFFFF" stroke="#9A9A9A" stroke-width="1.9"/>
<defs>
<filter id="shadow" x="-10%" y="-10%" width="120%" height="125%"><feGaussianBlur stdDeviation="7"/></filter>
<linearGradient id="titleg" x1="0" y1="0" x2="1" y2="0">
<stop offset="0" stop-color="#D2D2D2"/><stop offset="0.18" stop-color="#C4C4C4"/><stop offset="0.3" stop-color="#9C9C9C"/>
<stop offset="0.55" stop-color="#969696"/><stop offset="0.8" stop-color="#A2A2A2"/><stop offset="1" stop-color="#C6C6C6"/></linearGradient>
<linearGradient id="titlev" x1="0" y1="0" x2="0" y2="1">
<stop offset="0" stop-color="#FFFFFF" stop-opacity="0.10"/><stop offset="0.6" stop-color="#FFFFFF" stop-opacity="0"/><stop offset="1" stop-color="#FFFFFF" stop-opacity="0.25"/></linearGradient>
<linearGradient id="capg" x1="0" y1="0" x2="0" y2="1">
<stop offset="0" stop-color="#E8E8E8"/><stop offset="0.45" stop-color="#D0D0D2"/><stop offset="0.5" stop-color="#A8A8AC"/><stop offset="1" stop-color="#B8B8BE"/></linearGradient>
<linearGradient id="closeg" x1="0" y1="0" x2="0" y2="1">
<stop offset="0" stop-color="#E9A99B"/><stop offset="0.45" stop-color="#D6705A"/><stop offset="0.5" stop-color="#B83A1E"/><stop offset="0.85" stop-color="#CC4A2A"/><stop offset="1" stop-color="#DA8A70"/></linearGradient>
<linearGradient id="btng" x1="0" y1="0" x2="0" y2="1">
<stop offset="0" stop-color="#F2F2F2"/><stop offset="0.5" stop-color="#EBEBEB"/><stop offset="0.52" stop-color="#DDDDDD"/><stop offset="1" stop-color="#CFCFCF"/></linearGradient>
<linearGradient id="okg" x1="0" y1="0" x2="0" y2="1">
<stop offset="0" stop-color="#F2F5F8"/><stop offset="0.5" stop-color="#E8EDF1"/><stop offset="0.52" stop-color="#D9E1E7"/><stop offset="1" stop-color="#CCD6DE"/></linearGradient>
<pattern id="hatch" width="2" height="2" patternUnits="userSpaceOnUse"><rect width="2" height="2" fill="#F4F4F4"/><rect width="1" height="1" fill="#C8C8C8"/><rect x="1" y="1" width="1" height="1" fill="#C8C8C8"/></pattern>
</defs>
<rect x="960.5" y="78.5" width="625.0" height="653.0" rx="8" fill="#000" opacity="0.55" filter="url(#shadow)"/>
<rect x="962.5" y="77.5" width="615.0" height="644.0" rx="6.5" fill="#C0C0C0" stroke="#1C1C1C" stroke-width="1.3"/>
<path d="M963.1 106.5 V84.0 A6 6 0 0 1 969.0 78.1 H1571.0 A6 6 0 0 1 1576.9 84.0 V106.5 Z" fill="url(#titleg)"/>
<path d="M963.1 106.5 V84.0 A6 6 0 0 1 969.0 78.1 H1571.0 A6 6 0 0 1 1576.9 84.0 V106.5 Z" fill="url(#titlev)"/>
<rect x="963.2" y="106.5" width="5.8" height="151" fill="#D2D2D2"/>
<rect x="1571" y="106.5" width="5.8" height="151" fill="#CACACA"/>
<rect x="963.2" y="257" width="5.8" height="458" fill="#A8A8A8"/>
<rect x="1571" y="257" width="5.8" height="458" fill="#A4A4A4"/>
<path d="M963.2 714.5 H1576.8 V716 A5 5 0 0 1 1572 720.8 H968 A5 5 0 0 1 963.2 716 Z" fill="#B2B2B2"/>
<rect x="963.5" y="78.5" width="613.0" height="642.0" rx="5.5" fill="none" stroke="#FFFFFF" stroke-opacity="0.55" stroke-width="0.9"/>
<text x="970.60" y="96.00" font-size="11.6" fill="#000000" textLength="36.00" lengthAdjust="spacingAndGlyphs">Marvin</text>
<path d="M1468.5 77.5 H1570 V91.5 a5 5 0 0 1 -5 5 H1473.5 a5 5 0 0 1 -5 -5 Z" fill="url(#capg)" stroke="#4F4F4F" stroke-width="1"/>
<path d="M1523.5 77.5 H1570 V91.5 a5 5 0 0 1 -5 5 H1523.5 Z" fill="url(#closeg)" stroke="#5A2A20" stroke-width="1"/>
<line x1="1496.5" y1="78" x2="1496.5" y2="96" stroke="#5A5A5A" stroke-width="1"/>
<line x1="1497.5" y1="78" x2="1497.5" y2="96" stroke="#F4F4F4" stroke-width="0.8"/>
<line x1="1522.5" y1="78" x2="1522.5" y2="96" stroke="#F4F4F4" stroke-width="0.8"/>
<rect x="1477.5" y="87.5" width="11" height="3.6" fill="#FFFFFF" stroke="#3A4050" stroke-width="0.9"/>
<rect x="1504.5" y="82.5" width="11" height="8.6" fill="none" stroke="#3A4050" stroke-width="2.6"/>
<rect x="1504.5" y="82.5" width="11" height="8.6" fill="none" stroke="#FFFFFF" stroke-width="1.2"/>
<path d="M1541 82 L1552 91 M1552 82 L1541 91" fill="none" stroke="#3A4050" stroke-width="4.2"/>
<path d="M1541 82 L1552 91 M1552 82 L1541 91" fill="none" stroke="#FFFFFF" stroke-width="2.2"/>
<rect x="969" y="106" width="602" height="609" fill="#F0F0F0"/>
<rect x="969.5" y="106.5" width="601" height="608" fill="none" stroke="#5A5A5A" stroke-width="1"/>
<rect x="970.5" y="107.5" width="599" height="606" fill="none" stroke="#FFFFFF" stroke-width="1"/>
<path d="M972.5 668.5 V109.5 H1569.5" fill="none" stroke="#5A5A5A" stroke-width="1"/>
<path d="M972.5 668.5 H1569.5" fill="none" stroke="#6A6A6A" stroke-width="1"/>
<text x="979.10" y="124.20" font-size="12.2" fill="#000000" textLength="19.50" lengthAdjust="spacingAndGlyphs">File</text>
<rect x="979.5" y="125" width="6.5" height="1" fill="#000000"/>
<text x="1011.70" y="124.20" font-size="12.2" fill="#000000" textLength="21.60" lengthAdjust="spacingAndGlyphs">Edit</text>
<rect x="1012.1" y="125" width="7.5" height="1" fill="#000000"/>
<text x="1044.40" y="124.20" font-size="12.2" fill="#000000" textLength="28.00" lengthAdjust="spacingAndGlyphs">View</text>
<rect x="1044.8" y="125" width="7.8" height="1" fill="#000000"/>
<text x="1083.40" y="124.20" font-size="12.2" fill="#000000" textLength="31.00" lengthAdjust="spacingAndGlyphs">Insert</text>
<rect x="1083.8" y="125" width="2.5" height="1" fill="#000000"/>
<text x="1126.60" y="124.20" font-size="12.2" fill="#000000" textLength="29.30" lengthAdjust="spacingAndGlyphs">Atom</text>
<rect x="1127" y="125" width="8.2" height="1" fill="#000000"/>
<text x="1167.60" y="124.20" font-size="12.2" fill="#000000" textLength="28.80" lengthAdjust="spacingAndGlyphs">Bond</text>
<rect x="1168" y="125" width="8.2" height="1" fill="#000000"/>
<text x="1208.60" y="124.20" font-size="12.2" fill="#000000" textLength="49.10" lengthAdjust="spacingAndGlyphs">Structure</text>
<rect x="1209" y="125" width="7.6" height="1" fill="#000000"/>
<text x="1270.00" y="124.20" font-size="12.2" fill="#000000" textLength="67.70" lengthAdjust="spacingAndGlyphs">Calculations</text>
<rect x="1270.4" y="125" width="8.2" height="1" fill="#000000"/>
<text x="1350.60" y="124.20" font-size="12.2" fill="#000000" textLength="46.90" lengthAdjust="spacingAndGlyphs">Services</text>
<rect x="1351" y="125" width="7.6" height="1" fill="#000000"/>
<text x="1409.60" y="124.20" font-size="12.2" fill="#000000" textLength="26.40" lengthAdjust="spacingAndGlyphs">Help</text>
<rect x="1410" y="125" width="8.2" height="1" fill="#000000"/>
<line x1="972" y1="129.5" x2="1569" y2="129.5" stroke="#A0A0A0" stroke-width="1"/>
<line x1="972" y1="130.5" x2="1569" y2="130.5" stroke="#FFFFFF" stroke-width="1"/>
<line x1="977.5" y1="134" x2="977.5" y2="158.5" stroke="#A0A0A0" stroke-width="1"/>
<line x1="978.5" y1="134" x2="978.5" y2="158.5" stroke="#FFFFFF" stroke-width="1"/>
<line x1="975" y1="158.5" x2="978" y2="158.5" stroke="#A0A0A0" stroke-width="1"/>
<line x1="975.5" y1="134" x2="975.5" y2="158" stroke="#FFFFFF" stroke-width="1"/>
<rect x="982" y="132" width="41" height="29" fill="#F6F6F6"/>
<line x1="982.5" y1="132" x2="982.5" y2="160.5" stroke="#A8A8A8" stroke-width="1"/>
<line x1="982" y1="132.5" x2="1022" y2="132.5" stroke="#A8A8A8" stroke-width="1"/>
<rect x="989.5" y="138.5" width="13" height="12" fill="none" stroke="#3C3C3C" stroke-width="1.2" stroke-dasharray="2 1.6"/>
<path d="M996.2 145.3 L1005.7 148.4 L1000.8 150 L999.4 154.5 Z" fill="#3C3C3C"/>
<path d="M1015.5 144.5 h5 l-2.5 3 Z" fill="#3A4A5C"/>
<path d="M1031 147 l7 -7 a3 3 0 0 1 4 0 l2.5 2.5 a3 3 0 0 1 0 4 l-7 7 a3 3 0 0 1 -4 0 l-2.5 -2.5 a3 3 0 0 1 0 -4 Z M1035.5 142.5 l6 6" fill="none" stroke="#3C3C3C" stroke-width="1.7"/>
<line x1="1056.5" y1="134" x2="1056.5" y2="159.5" stroke="#9A9A9A" stroke-width="1"/>
<line x1="1124.5" y1="134" x2="1124.5" y2="159.5" stroke="#9A9A9A" stroke-width="1"/>
<line x1="1223.5" y1="134" x2="1223.5" y2="159.5" stroke="#9A9A9A" stroke-width="1"/>
<line x1="1260.5" y1="134" x2="1260.5" y2="159.5" stroke="#9A9A9A" stroke-width="1"/>
<line x1="1405.5" y1="134" x2="1405.5" y2="159.5" stroke="#9A9A9A" stroke-width="1"/>
<path d="M1070.5 142 A6.8 6.8 0 1 1 1075 154.5" fill="none" stroke="#3C3C3C" stroke-width="2"/>
<path d="M1067 138.5 L1073.5 140 L1068 145.5 Z" fill="#3C3C3C"/>
<path d="M1110.5 142 A6.8 6.8 0 1 0 1106 154.5" fill="none" stroke="#8A8A8A" stroke-width="2"/>
<path d="M1114 138.5 L1107.5 140 L1113 145.5 Z" fill="#8A8A8A"/>
<path d="M1136 138 L1149 151 M1150 138 L1137 151" fill="none" stroke="#8E8E8E" stroke-width="1.4"/>
<circle cx="1136" cy="152.5" r="2.2" fill="none" stroke="#8E8E8E" stroke-width="1.3"/><circle cx="1150" cy="152.5" r="2.2" fill="none" stroke="#8E8E8E" stroke-width="1.3"/>
<path d="M1167 144 h6 l3 3 v7.5 h-9 Z" fill="none" stroke="#8A8A8A" stroke-width="1.7"/>
<path d="M1173 141.5 v-4 h5.5 l3.5 3.5 v9 h-4" fill="none" stroke="#8A8A8A" stroke-width="1.3"/>
<path d="M1207 138.5 h2 l0 0 M1202 139 h-1.5 v3 M1210.5 139 h2 v15 h-1.5" fill="none" stroke="#3C3C3C" stroke-width="1.2"/>
<rect x="1203.5" y="136.2" width="5.5" height="2.8" fill="#3C3C3C" rx="1.2"/>
<path d="M1198.5 143 h6 l3.5 3.5 v8 h-9.5 Z" fill="none" stroke="#1E6FD9" stroke-width="2.2"/>
<path d="M1240 137.5 L1246.5 141 V149 L1240 152.5 L1234 149 V141 Z" fill="none" stroke="#3C3C3C" stroke-width="1.8"/>
<path d="M1237 142.5 l5 -3" fill="none" stroke="#3C3C3C" stroke-width="0.8"/>
<path d="M1243 150.5 L1246 154 L1251.5 145.5" fill="none" stroke="#1E6FD9" stroke-width="2"/>
<circle cx="1277.5" cy="144.5" r="5.8" fill="none" stroke="#3C3C3C" stroke-width="1.2"/>
<line x1="1281.8" y1="149" x2="1285.5" y2="152.8" stroke="#3C3C3C" stroke-width="2.4"/>
<line x1="1274.2" y1="144.5" x2="1280.8" y2="144.5" stroke="#1E6FD9" stroke-width="2"/>
<line x1="1277.5" y1="141.2" x2="1277.5" y2="147.8" stroke="#1E6FD9" stroke-width="2"/>
<circle cx="1308.5" cy="144.5" r="5.8" fill="none" stroke="#3C3C3C" stroke-width="1.2"/>
<line x1="1312.8" y1="149" x2="1316.5" y2="152.8" stroke="#3C3C3C" stroke-width="2.4"/>
<line x1="1305.2" y1="144.5" x2="1311.8" y2="144.5" stroke="#1E6FD9" stroke-width="2"/>
<rect x="1326.5" y="135.5" width="75" height="20" fill="#FFFFFF" stroke="#7A7A7A" stroke-width="1"/>
<line x1="1327.5" y1="136.5" x2="1400" y2="136.5" stroke="#A0A0A0" stroke-width="1"/>
<rect x="1382" y="136.5" width="18.5" height="18" fill="#F0F0F0"/>
<line x1="1382" y1="154.5" x2="1401" y2="154.5" stroke="#7A7A7A" stroke-width="1"/>
<path d="M1386.5 143.5 h8 l-4 4 Z" fill="#606060"/>
<text x="1332.30" y="150.00" font-size="11.5" fill="#000000" textLength="27.00" lengthAdjust="spacingAndGlyphs">228%</text>
<path d="M1423.5 136.5 L1431.5 141 V150 L1423.5 154.5 L1415.5 150 V141 Z" fill="#4A4A4A"/>
<text x="1420.20" y="150.00" font-size="11" fill="#FFFFFF" textLength="6.50" lengthAdjust="spacingAndGlyphs" font-weight="bold">?</text>
<rect x="1016" y="162" width="506" height="427" fill="#FFFFFF"/>
<line x1="975" y1="166.5" x2="1012" y2="166.5" stroke="#A0A0A0" stroke-width="1"/>
<line x1="975" y1="167.5" x2="1012" y2="167.5" stroke="#FFFFFF" stroke-width="1"/>
<line x1="982.5" y1="190.5" x2="995.5" y2="178.5" stroke="#3C3C3C" stroke-width="2"/>
<path d="M1007.1999999999999 183.3 h4.4 l-2.2 2.6 Z" fill="#3A4A5C"/>
<path d="M979.5 218 L984.5 209.5 L989.5 218 L994.5 209.5 L999.5 218" fill="none" stroke="#3C3C3C" stroke-width="1.2"/>
<path d="M1007.1999999999999 212.3 h4.4 l-2.2 2.6 Z" fill="#3A4A5C"/>
<path d="M980.5 240.5 h17.5 l-3.5 3.5 h-10.5 Z" fill="#3C3C3C"/>
<line x1="981" y1="270.5" x2="997" y2="270.5" stroke="#3C3C3C" stroke-width="3" stroke-dasharray="1 1"/>
<text x="981.50" y="308.50" font-size="17" fill="#1E6FD9" textLength="14.00" lengthAdjust="spacingAndGlyphs" font-weight="bold" font-family="Liberation Serif">T</text>
<text x="979.50" y="334.50" font-size="10" fill="#1E6FD9" textLength="6.50" lengthAdjust="spacingAndGlyphs">N</text>
<path d="M987 325.5 h4 M987 336.5 h4 M989 325.5 v11" fill="none" stroke="#3C3C3C" stroke-width="1"/>
<rect x="991.5" y="327" width="6.5" height="1.6" fill="#3C3C3C"/>
<rect x="991.5" y="330" width="5" height="1.6" fill="#3C3C3C"/>
<rect x="991.5" y="333" width="4" height="1.6" fill="#3C3C3C"/>
<line x1="980" y1="359.5" x2="994" y2="359.5" stroke="#1E6FD9" stroke-width="2.2"/>
<path d="M992 355 L998 359.5 L992 364 Z" fill="#1E6FD9"/>
<path d="M1007.1999999999999 357.8 h4.4 l-2.2 2.6 Z" fill="#3A4A5C"/>
<path d="M984.5 381.5 h-2.5 v13 h2.5 M990.5 381.5 h2.5 v13 h-2.5" fill="none" stroke="#3C3C3C" stroke-width="1.8"/>
<text x="993.50" y="397.50" font-size="7.5" fill="#3C3C3C" textLength="4.80" lengthAdjust="spacingAndGlyphs">n</text>
<path d="M984.5 410.5 h-2.5 v13 h2.5 M991.5 410.5 h2.5 v13 h-2.5" fill="none" stroke="#1E6FD9" stroke-width="2"/>
<path d="M1007.1999999999999 415.8 h4.4 l-2.2 2.6 Z" fill="#3A4A5C"/>
<rect x="981.5" y="441.5" width="15.5" height="9" fill="none" stroke="#1E6FD9" stroke-width="1.2"/>
<path d="M1007.1999999999999 444.8 h4.4 l-2.2 2.6 Z" fill="#3A4A5C"/>
<line x1="984" y1="475" x2="994" y2="475" stroke="#3C3C3C" stroke-width="1.8"/>
<line x1="989" y1="470" x2="989" y2="480" stroke="#3C3C3C" stroke-width="1.8"/>
<line x1="984" y1="504" x2="994" y2="504" stroke="#3C3C3C" stroke-width="1.8"/>
<line x1="1542" y1="166.5" x2="1567" y2="166.5" stroke="#A0A0A0" stroke-width="1"/>
<line x1="1542" y1="167.5" x2="1567" y2="167.5" stroke="#FFFFFF" stroke-width="1"/>
<rect x="1545" y="182" width="1.8" height="1.8" fill="#222"/>
<rect x="1545" y="185" width="1.8" height="1.8" fill="#222"/>
<rect x="1545" y="188" width="1.8" height="1.8" fill="#222"/>
<rect x="1548" y="188" width="1.8" height="1.8" fill="#1A9A1A"/>
<rect x="1551" y="188" width="1.8" height="1.8" fill="#222"/>
<rect x="1554" y="185" width="1.8" height="1.8" fill="#1A9A1A"/>
<rect x="1557" y="185" width="1.8" height="1.8" fill="#222"/>
<rect x="1560" y="185" width="1.8" height="1.8" fill="#1A9A1A"/>
<rect x="1563" y="182" width="1.8" height="1.8" fill="#222"/>
<rect x="1563" y="185" width="1.8" height="1.8" fill="#222"/>
<rect x="1548" y="185" width="1.8" height="1.8" fill="#1A9A1A"/>
<rect x="1551" y="185" width="1.8" height="1.8" fill="#222"/>
<rect x="1554" y="188" width="1.8" height="1.8" fill="#222"/>
<rect x="1560" y="182" width="1.8" height="1.8" fill="#1A9A1A"/>
<text x="1554.00" y="218.80" font-size="12" fill="#333333" font-weight="bold" text-anchor="middle">H</text>
<text x="1554.00" y="247.80" font-size="12" fill="#000000" font-weight="bold" text-anchor="middle">C</text>
<text x="1554.00" y="276.80" font-size="12" fill="#3333A0" font-weight="bold" text-anchor="middle">N</text>
<text x="1554.00" y="305.80" font-size="12" fill="#FF0000" font-weight="bold" text-anchor="middle">O</text>
<text x="1554.00" y="334.80" font-size="12" fill="#70701A" font-weight="bold" text-anchor="middle">S</text>
<text x="1554.00" y="363.80" font-size="12" fill="#B07A1E" font-weight="bold" text-anchor="middle">F</text>
<text x="1554.00" y="392.80" font-size="12" fill="#B0701E" font-weight="bold" text-anchor="middle">P</text>
<text x="1554.00" y="421.80" font-size="12" fill="#22A022" font-weight="bold" text-anchor="middle">Cl</text>
<text x="1554.00" y="450.80" font-size="12" fill="#7A3A3A" font-weight="bold" text-anchor="middle">Br</text>
<text x="1554.00" y="479.80" font-size="12.5" fill="#7A1AAA" font-weight="bold" text-anchor="middle" font-family="Liberation Serif">I</text>
<rect x="1522" y="162" width="16" height="427" fill="url(#hatch)"/>
<rect x="1522" y="162" width="16" height="16" fill="#F0F0F0"/>
<path d="M1522.5 178 V162.5 H1538" fill="none" stroke="#FFFFFF" stroke-width="1"/>
<path d="M1537.5 162 V177.5 H1522" fill="none" stroke="#7A7A7A" stroke-width="1"/>
<path d="M1526.5 173 h7 l-3.5 -3.5 Z" fill="#505050"/>
<rect x="1522" y="285" width="16" height="220" fill="#F0F0F0"/>
<path d="M1522.5 505 V285.5 H1538" fill="none" stroke="#FFFFFF" stroke-width="1"/>
<path d="M1537.5 285 V504.5 H1522" fill="none" stroke="#7A7A7A" stroke-width="1"/>
<rect x="1522" y="573.5" width="16" height="15.5" fill="#F0F0F0"/>
<path d="M1522.5 589.0 V574.0 H1538" fill="none" stroke="#FFFFFF" stroke-width="1"/>
<path d="M1537.5 573.5 V588.5 H1522" fill="none" stroke="#7A7A7A" stroke-width="1"/>
<path d="M1526.5 579 h7 l-3.5 3.5 Z" fill="#505050"/>
<rect x="1016" y="589" width="506" height="16" fill="url(#hatch)"/>
<rect x="1016" y="589" width="16" height="16" fill="#F0F0F0"/>
<path d="M1016.5 605 V589.5 H1032" fill="none" stroke="#FFFFFF" stroke-width="1"/>
<path d="M1031.5 589 V604.5 H1016" fill="none" stroke="#7A7A7A" stroke-width="1"/>
<path d="M1027 593.5 v7 l-3.5 -3.5 Z" fill="#505050"/>
<rect x="1140" y="589" width="303" height="16" fill="#F0F0F0"/>
<path d="M1140.5 605 V589.5 H1443" fill="none" stroke="#FFFFFF" stroke-width="1"/>
<path d="M1442.5 589 V604.5 H1140" fill="none" stroke="#7A7A7A" stroke-width="1"/>
<rect x="1506" y="589" width="16" height="16" fill="#F0F0F0"/>
<path d="M1506.5 605 V589.5 H1522" fill="none" stroke="#FFFFFF" stroke-width="1"/>
<path d="M1521.5 589 V604.5 H1506" fill="none" stroke="#7A7A7A" stroke-width="1"/>
<path d="M1511 593.5 v7 l3.5 -3.5 Z" fill="#505050"/>
<rect x="1522" y="589" width="16" height="16" fill="#F0F0F0"/>
<path d="M1282 236.5 L1260.5 272.5" fill="none" stroke="#0A9A0A" stroke-width="4"/>
<path d="M1234.5 290.5 H1165.5 L1122.5 363 L1139 390.8" fill="none" stroke="#0A9A0A" stroke-width="4" stroke-linejoin="miter"/>
<path d="M1139 390.8 L1154 418.5" fill="none" stroke="#F01010" stroke-width="4"/>
<path d="M1261 309.5 L1292.5 364.5 L1277.3 390.8" fill="none" stroke="#0A9A0A" stroke-width="4" stroke-linejoin="miter"/>
<path d="M1277.3 390.8 L1261 418.5" fill="none" stroke="#F01010" stroke-width="4"/>
<text x="1281.20" y="229.60" font-size="32.6" fill="#0A9A0A" textLength="45.50" lengthAdjust="spacingAndGlyphs">CH</text>
<text x="1328.30" y="239.40" font-size="26" fill="#0A9A0A" textLength="14.00" lengthAdjust="spacingAndGlyphs">3</text>
<text x="1239.20" y="302.50" font-size="33" fill="#0A9A0A" textLength="21.00" lengthAdjust="spacingAndGlyphs">N</text>
<text x="1152.80" y="449.50" font-size="32" fill="#F01010" textLength="22.00" lengthAdjust="spacingAndGlyphs">A</text>
<text x="1239.60" y="449.50" font-size="32" fill="#F01010" textLength="22.00" lengthAdjust="spacingAndGlyphs">A</text>
<text x="1168.00" y="470.50" font-size="24" fill="#00009A" textLength="12.00" lengthAdjust="spacingAndGlyphs">1</text>
<text x="1230.60" y="470.50" font-size="24" fill="#00009A" textLength="15.00" lengthAdjust="spacingAndGlyphs">2</text>
<line x1="977.5" y1="608" x2="977.5" y2="638.5" stroke="#A0A0A0" stroke-width="1"/>
<line x1="978.5" y1="608" x2="978.5" y2="638.5" stroke="#FFFFFF" stroke-width="1"/>
<line x1="1111.5" y1="608" x2="1111.5" y2="638.5" stroke="#A0A0A0" stroke-width="1"/>
<line x1="1112.5" y1="608" x2="1112.5" y2="638.5" stroke="#FFFFFF" stroke-width="1"/>
<circle cx="994.5" cy="612.8" r="2.6" fill="#111"/><circle cx="998.8" cy="624" r="2.6" fill="#111"/>
<path d="M1003.5 611 Q1000 619 988.5 620" fill="none" stroke="#1A7A9A" stroke-width="1.6"/>
<path d="M986.5 620 l3.5 -2.8 v5 Z" fill="#1A7A9A"/>
<path d="M1007.5 622 Q1004 630 993 631" fill="none" stroke="#1A7A9A" stroke-width="1.6"/>
<path d="M991 631 l3.5 -2.8 v5 Z" fill="#1A7A9A"/>
<circle cx="1018.5" cy="619" r="2.4" fill="#9A9A9A"/>
<circle cx="1037.5" cy="612" r="2.4" fill="#9A9A9A"/>
<circle cx="1018.5" cy="630" r="2.4" fill="#9A9A9A"/>
<circle cx="1037.5" cy="623.5" r="2.4" fill="#9A9A9A"/>
<path d="M1034 615 Q1030 620 1023 619.5 M1034 626.5 Q1030 631 1023 630.5" fill="none" stroke="#9A9A9A" stroke-width="2.4"/>
<path d="M1047 611 L1071 610 L1071 634 L1047 627 Z" fill="#BDBDBD" stroke="#B0B0B0" stroke-width="0.8"/>
<circle cx="1064" cy="616" r="3.2" fill="#9A9A9A"/><circle cx="1052" cy="617" r="1.8" fill="#A8A8A8"/><circle cx="1057" cy="625" r="2.2" fill="#A4A4A4"/>
<rect x="1078.5" y="619.5" width="17" height="14" fill="#D0D0D0" stroke="#555" stroke-width="1.2" rx="2"/>
<rect x="1083.5" y="610.5" width="18" height="16" fill="#D8D8D8" stroke="#555" stroke-width="1.2" rx="2"/>
<rect x="1083.5" y="610.5" width="18" height="3" fill="#444"/>
<path d="M1095 620 Q1095 627 1088 627" fill="none" stroke="#1A7A9A" stroke-width="1.8"/>
<path d="M1086 627 l3.5 -2.8 v5 Z" fill="#1A7A9A"/>
<path d="M1123.5 613.5 H1144.5 V626.5 L1134 632 L1123.5 626.5 Z" fill="none" stroke="#2A2A2A" stroke-width="1.2"/>
<path d="M1163.2 626.4 L1160.5 624.6 V612.6 H1181.1 V624.6 L1178.2 626.4" fill="none" stroke="#2A2A2A" stroke-width="1.3"/>
<path d="M1163.2 626.4 L1166.8 628.6 M1178.2 626.4 L1174.5 628.6" fill="none" stroke="#4A4AA6" stroke-width="1.3"/>
<line x1="1162.7" y1="615.2" x2="1162.7" y2="623" stroke="#2A2A2A" stroke-width="1.1"/>
<line x1="1179" y1="615.2" x2="1179" y2="623" stroke="#707070" stroke-width="1.1"/>
<text x="1167.70" y="632.80" font-size="6" fill="#4040A8" textLength="4.60" lengthAdjust="spacingAndGlyphs">N</text>
<path d="M1208.00 612.70 L1218.27 620.16 L1214.35 632.24 L1201.65 632.24 L1197.73 620.16 Z" fill="none" stroke="#2A2A2A" stroke-width="1.2"/>
<path d="M1244.30 612.00 L1253.65 617.40 L1253.65 628.20 L1244.30 633.60 L1234.95 628.20 L1234.95 617.40 Z" fill="none" stroke="#2A2A2A" stroke-width="1.2"/>
<path d="M1281.70 611.90 L1291.23 617.40 L1291.23 628.40 L1281.70 633.90 L1272.17 628.40 L1272.17 617.40 Z" fill="none" stroke="#2A2A2A" stroke-width="1.2"/>
<path d="M1282.59 614.83 L1288.24 618.10 M1274.27 626.16 L1274.27 619.64 M1288.24 627.70 L1282.59 630.97 " fill="none" stroke="#2A2A2A" stroke-width="1.1"/>
<path d="M1313.10 616.10 L1318.73 619.35 L1318.73 625.85 L1313.10 629.10 L1307.47 625.85 L1307.47 619.35 Z" fill="none" stroke="#2A2A2A" stroke-width="1.2"/>
<path d="M1324.35 616.10 L1329.98 619.35 L1329.98 625.85 L1324.35 629.10 L1318.72 625.85 L1318.72 619.35 Z" fill="none" stroke="#2A2A2A" stroke-width="1.2"/>
<path d="M1309.53 619.98 L1312.61 618.20 M1312.61 627.00 L1309.53 625.22 M1317.15 620.82 L1317.15 624.38 " fill="none" stroke="#2A2A2A" stroke-width="1.0"/>
<path d="M1324.84 618.20 L1327.92 619.98 M1327.92 625.22 L1324.84 627.00 " fill="none" stroke="#2A2A2A" stroke-width="1.0"/>
<path d="M1355.60 620.10 L1361.58 623.55 L1361.58 630.45 L1355.60 633.90 L1349.62 630.45 L1349.62 623.55 Z" fill="none" stroke="#2A2A2A" stroke-width="1.1"/>
<path d="M1356.13 622.20 L1359.49 624.14 M1351.18 628.94 L1351.18 625.06 M1359.49 629.86 L1356.13 631.80 " fill="none" stroke="#2A2A2A" stroke-width="1.0"/>
<line x1="1355.6" y1="620.1" x2="1355.6" y2="616.3" stroke="#3AAA3A" stroke-width="1"/>
<text x="1352.50" y="615.00" font-size="5.5" fill="#3AAA3A" textLength="6.00" lengthAdjust="spacingAndGlyphs">Cl</text>
<text x="980.30" y="657.50" font-size="11.6" fill="#000000" textLength="13.20" lengthAdjust="spacingAndGlyphs">2D</text>
<text x="1004.60" y="657.50" font-size="8.5" fill="#000000" textLength="3.80" lengthAdjust="spacingAndGlyphs">*</text>
<path d="M1028.5 648.5 L1034 651.5 V657.5 L1028.5 660.5 L1023 657.5 V651.5 Z" fill="none" stroke="#444" stroke-width="1.3"/>
<path d="M1030 657 l5 5 M1035 657 l-5 5" fill="none" stroke="#333" stroke-width="0.9"/>
<rect x="974.5" y="677.5" width="349" height="32" rx="3" fill="none" stroke="#D5DFE5" stroke-width="1"/>
<rect x="981" y="671" width="68" height="12" fill="#F0F0F0"/>
<text x="982.50" y="681.50" font-size="11.4" fill="#000000" textLength="67.00" lengthAdjust="spacingAndGlyphs">ID Assignment</text>
<text x="1013.00" y="699.30" font-size="11.4" fill="#000000" textLength="86.50" lengthAdjust="spacingAndGlyphs">Type or Select Id:</text>
<rect x="1107" y="684" width="212" height="21" fill="#FFFFFF"/>
<rect x="1301" y="685" width="17" height="19" fill="#F2F2F2"/>
<path d="M1305.5 693 h6 l-3 3.2 Z" fill="#000000"/>
<rect x="1351.5" y="690.5" width="91" height="19.5" rx="2.5" fill="url(#okg)" stroke="#3C7FB1" stroke-width="1"/>
<rect x="1352.5" y="691.5" width="89" height="17.5" rx="1.5" fill="none" stroke="#48C0F0" stroke-width="1" opacity="0.7"/>
<rect x="1461.5" y="690.5" width="91" height="19.5" rx="2.5" fill="url(#btng)" stroke="#707070" stroke-width="1"/>
<text x="1390.00" y="704.50" font-size="11.4" fill="#000000" textLength="14.50" lengthAdjust="spacingAndGlyphs">OK</text>
<text x="1491.00" y="704.50" font-size="11.4" fill="#000000" textLength="32.50" lengthAdjust="spacingAndGlyphs">Cancel</text>
<rect x="1564" y="702" width="1.2" height="1.2" fill="#A0A0A0"/>
<rect x="1561" y="705" width="1.2" height="1.2" fill="#A0A0A0"/>
<rect x="1564" y="705" width="1.2" height="1.2" fill="#A0A0A0"/>
<rect x="1558" y="708" width="1.2" height="1.2" fill="#A0A0A0"/>
<rect x="1561" y="708" width="1.2" height="1.2" fill="#A0A0A0"/>
<rect x="1564" y="708" width="1.2" height="1.2" fill="#A0A0A0"/>
</svg>
</body></html>
